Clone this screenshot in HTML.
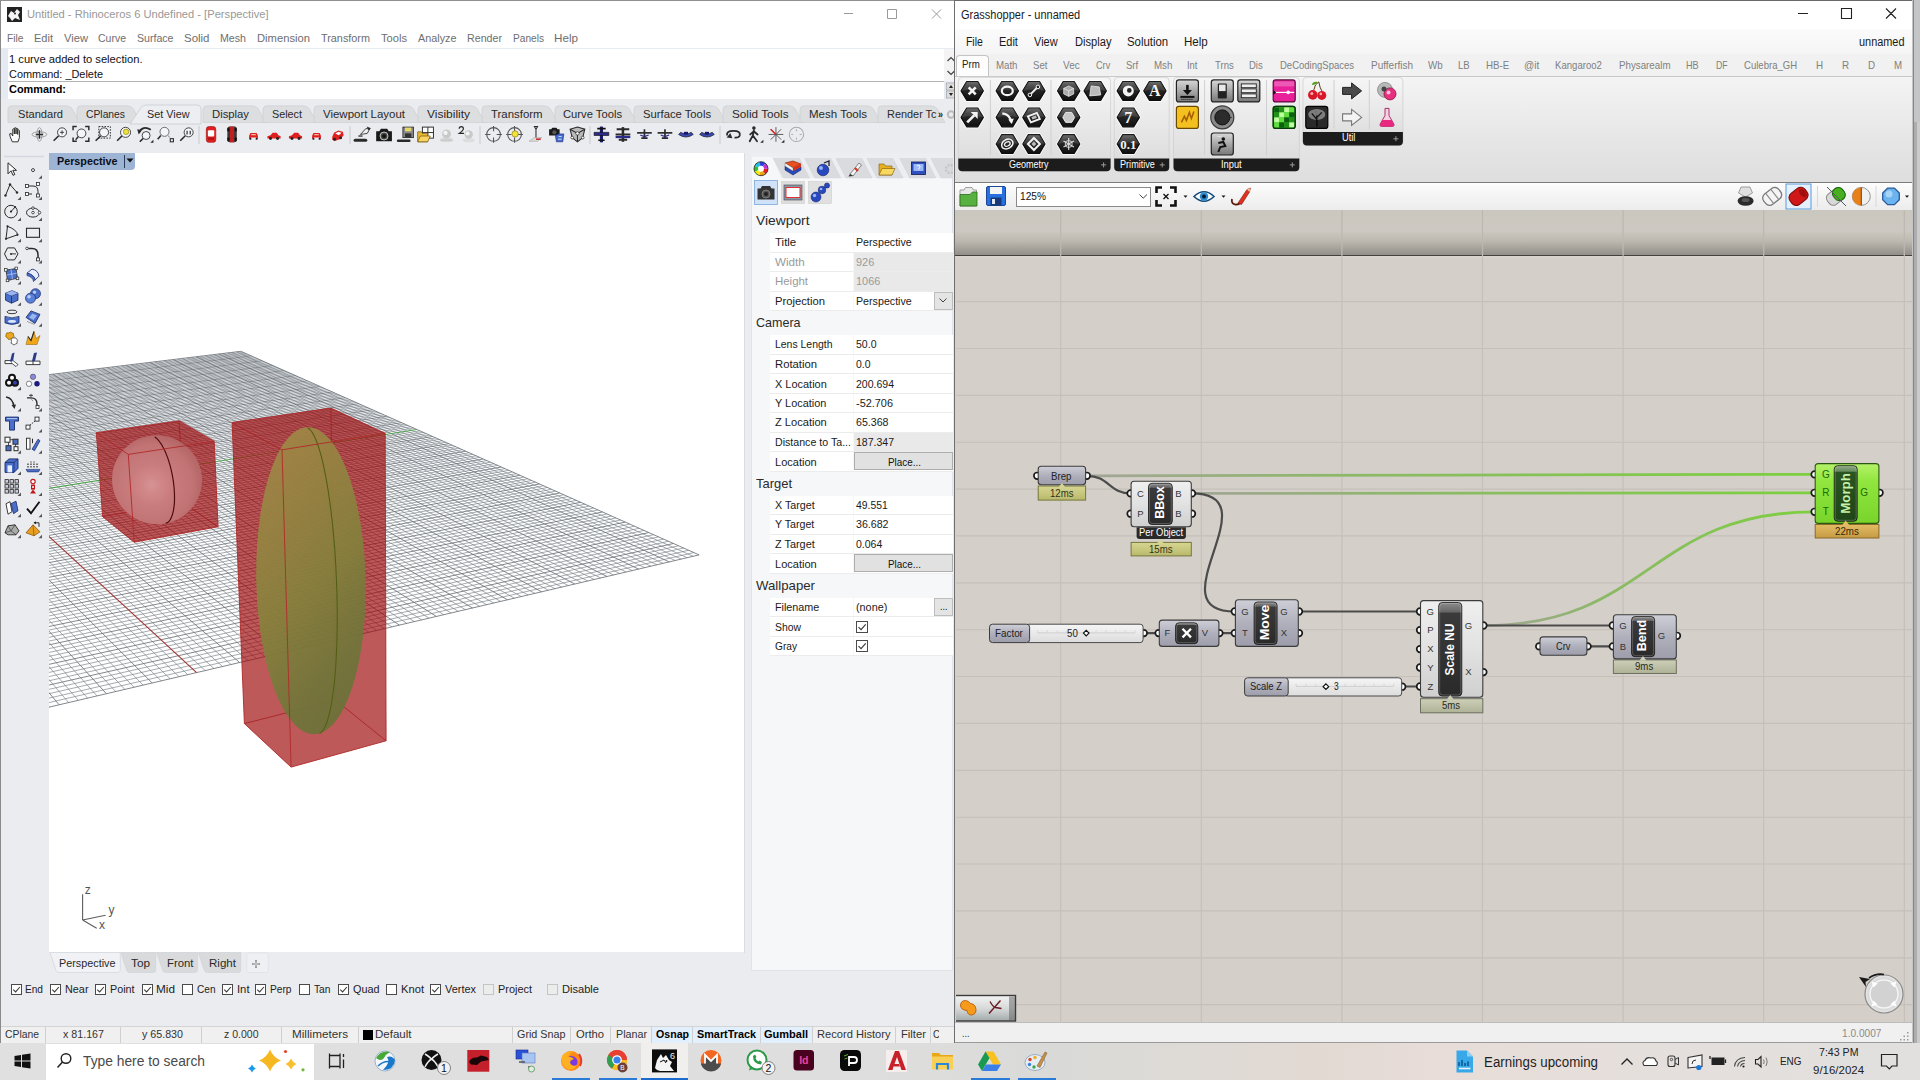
<!DOCTYPE html>
<html><head><meta charset="utf-8"><title>Rhino + Grasshopper</title><style>
html,body{margin:0;padding:0;}
body{width:1920px;height:1080px;overflow:hidden;position:relative;background:#fff;font-family:"Liberation Sans",sans-serif;}
.a{position:absolute;box-sizing:border-box;}
.t{position:absolute;white-space:nowrap;transform-origin:0 50%;display:block;}
svg{position:absolute;overflow:hidden;}
</style></head><body><div class="a" style="left:0px;top:0px;width:955px;height:1043px;background:#ebecf0;"></div>
<div class="a" style="left:0px;top:0px;width:955px;height:48px;background:#fff;"></div>
<div class="a" style="left:0px;top:0px;width:1px;height:1043px;background:#8a8a8a;"></div>
<div class="a" style="left:0px;top:0px;width:955px;height:1px;background:#909090;"></div>
<svg class="a" style="left:6px;top:6px" width="17" height="17" viewBox="0 0 17 17"><rect x="1" y="1" width="15" height="15" fill="#222"/><path d="M2 10L5 5L8 7L11 3L14 6L12 9L14 14L9 12L6 15L4 12Z" fill="#f4f4f4"/><circle cx="9" cy="7.5" r="1" fill="#222"/></svg>
<span class="t" style="left:26.50px;top:8px;font-size:11px;line-height:12px;height:12px;color:#989898;transform:scaleX(1.0129);">Untitled - Rhinoceros 6 Undefined - [Perspective]</span>
<svg class="a" style="left:840px;top:5px" width="110" height="20" viewBox="0 0 110 20"><path d="M4 8.5H13M47.5 4.5H56.500V13.5H47.5ZM92 4.500L101 13.500M101 4.500L92 13.500" stroke="#9a9a9a" stroke-width="1" fill="none"/></svg>
<span class="t" style="left:6.50px;top:32px;font-size:11px;line-height:12px;height:12px;color:#6e6e6e;transform:scaleX(0.9310);">File</span>
<span class="t" style="left:34.00px;top:32px;font-size:11px;line-height:12px;height:12px;color:#6e6e6e;transform:scaleX(1.0024);">Edit</span>
<span class="t" style="left:64.00px;top:32px;font-size:11px;line-height:12px;height:12px;color:#6e6e6e;transform:scaleX(1.0151);">View</span>
<span class="t" style="left:98.00px;top:32px;font-size:11px;line-height:12px;height:12px;color:#6e6e6e;transform:scaleX(0.9543);">Curve</span>
<span class="t" style="left:136.50px;top:32px;font-size:11px;line-height:12px;height:12px;color:#6e6e6e;transform:scaleX(0.9629);">Surface</span>
<span class="t" style="left:183.50px;top:32px;font-size:11px;line-height:12px;height:12px;color:#6e6e6e;transform:scaleX(1.0425);">Solid</span>
<span class="t" style="left:220.00px;top:32px;font-size:11px;line-height:12px;height:12px;color:#6e6e6e;transform:scaleX(0.9667);">Mesh</span>
<span class="t" style="left:257.00px;top:32px;font-size:11px;line-height:12px;height:12px;color:#6e6e6e;transform:scaleX(1.0200);">Dimension</span>
<span class="t" style="left:320.50px;top:32px;font-size:11px;line-height:12px;height:12px;color:#6e6e6e;transform:scaleX(0.9858);">Transform</span>
<span class="t" style="left:380.50px;top:32px;font-size:11px;line-height:12px;height:12px;color:#6e6e6e;transform:scaleX(1.0125);">Tools</span>
<span class="t" style="left:417.50px;top:32px;font-size:11px;line-height:12px;height:12px;color:#6e6e6e;transform:scaleX(0.9838);">Analyze</span>
<span class="t" style="left:466.50px;top:32px;font-size:11px;line-height:12px;height:12px;color:#6e6e6e;transform:scaleX(0.9702);">Render</span>
<span class="t" style="left:512.50px;top:32px;font-size:11px;line-height:12px;height:12px;color:#6e6e6e;transform:scaleX(0.9217);">Panels</span>
<span class="t" style="left:553.50px;top:32px;font-size:11px;line-height:12px;height:12px;color:#6e6e6e;transform:scaleX(1.0609);">Help</span>
<div class="a" style="left:1px;top:48px;width:954px;height:51px;background:#e6eaf2;"></div>
<div class="a" style="left:7.5px;top:49px;width:936px;height:49.5px;background:#fff;"></div>
<div class="a" style="left:7.5px;top:81px;width:936px;height:1px;background:#b4b4b4;"></div>
<span class="t" style="left:8.50px;top:53px;font-size:11px;line-height:12px;height:12px;color:#111;transform:scaleX(1.0155);">1 curve added to selection.</span>
<span class="t" style="left:8.50px;top:68px;font-size:11px;line-height:12px;height:12px;color:#111;transform:scaleX(0.9920);">Command: _Delete</span>
<span class="t" style="left:8.50px;top:83px;font-size:11px;line-height:12px;height:12px;color:#000;font-weight:bold;transform:scaleX(0.9923);">Command:</span>
<div class="a" style="left:943.5px;top:49px;width:10px;height:32px;background:#f4f4f4;"></div>
<svg class="a" style="left:944.5px;top:50px" width="12" height="50" viewBox="0 0 12 50"><path d="M2.5 11L6 7.500L9.500 11M2.5 21L6 24.500L9.500 21" stroke="#444" stroke-width="1.2" fill="none"/><rect x="1.500" y="33" width="9" height="7" fill="#ddd" stroke="#999" stroke-width=".6"/><rect x="1.500" y="41" width="9" height="7" fill="#ddd" stroke="#999" stroke-width=".6"/><path d="M4 38L6 35L8 38ZM4 43L6 46L8 43Z" fill="#222"/></svg>
<svg class="a" style="left:0;top:104px" width="955" height="21" viewBox="0 104 955 21"><path d="M8 122.500L8 109.500Q8 105.800 12 105.800L66 105.800Q70 105.800 72 108.500L80 122.500Z" fill="#dddee0" stroke="#c9cbcf" stroke-width=".6"/><path d="M77 122.500L77 109.500Q77 105.800 81 105.800L127 105.800Q131 105.800 133 108.500L141 122.500Z" fill="#dddee0" stroke="#c9cbcf" stroke-width=".6"/><path d="M130 124L141 107.500Q143 105 146 105L197 105Q201 105 201 108.500L201 124Z" fill="#eceef2" stroke="#c9cbcf" stroke-width=".8"/><path d="M203 122.500L203 109.500Q203 105.800 207 105.800L252 105.800Q256 105.800 258 108.500L266 122.500Z" fill="#dddee0" stroke="#c9cbcf" stroke-width=".6"/><path d="M263 122.500L263 109.500Q263 105.800 267 105.800L303 105.800Q307 105.800 309 108.500L317 122.500Z" fill="#dddee0" stroke="#c9cbcf" stroke-width=".6"/><path d="M314 122.500L314 109.500Q314 105.800 318 105.800L407 105.800Q411 105.800 413 108.500L421 122.500Z" fill="#dddee0" stroke="#c9cbcf" stroke-width=".6"/><path d="M418 122.500L418 109.500Q418 105.800 422 105.800L471 105.800Q475 105.800 477 108.500L485 122.500Z" fill="#dddee0" stroke="#c9cbcf" stroke-width=".6"/><path d="M482 122.500L482 109.500Q482 105.800 486 105.800L544 105.800Q548 105.800 550 108.500L558 122.500Z" fill="#dddee0" stroke="#c9cbcf" stroke-width=".6"/><path d="M555 122.500L555 109.500Q555 105.800 559 105.800L623 105.800Q627 105.800 629 108.500L637 122.500Z" fill="#dddee0" stroke="#c9cbcf" stroke-width=".6"/><path d="M634 122.500L634 109.500Q634 105.800 638 105.800L712 105.800Q716 105.800 718 108.500L726 122.500Z" fill="#dddee0" stroke="#c9cbcf" stroke-width=".6"/><path d="M723 122.500L723 109.500Q723 105.800 727 105.800L789 105.800Q793 105.800 795 108.500L803 122.500Z" fill="#dddee0" stroke="#c9cbcf" stroke-width=".6"/><path d="M800 122.500L800 109.500Q800 105.800 804 105.800L867 105.800Q871 105.800 873 108.500L881 122.500Z" fill="#dddee0" stroke="#c9cbcf" stroke-width=".6"/><path d="M878 122.500L878 109.500Q878 105.800 882 105.800L931 105.800Q935 105.800 937 108.500L945 122.500Z" fill="#dddee0" stroke="#c9cbcf" stroke-width=".6"/></svg>
<span class="t" style="left:18.00px;top:108px;font-size:11px;line-height:12px;height:12px;color:#2a2a2a;transform:scaleX(1.0080);">Standard</span>
<span class="t" style="left:85.50px;top:108px;font-size:11px;line-height:12px;height:12px;color:#2a2a2a;transform:scaleX(0.9380);">CPlanes</span>
<span class="t" style="left:147.00px;top:108px;font-size:11px;line-height:12px;height:12px;color:#2a2a2a;transform:scaleX(0.9836);">Set View</span>
<span class="t" style="left:212.00px;top:108px;font-size:11px;line-height:12px;height:12px;color:#2a2a2a;transform:scaleX(1.0259);">Display</span>
<span class="t" style="left:271.50px;top:108px;font-size:11px;line-height:12px;height:12px;color:#2a2a2a;transform:scaleX(0.9813);">Select</span>
<span class="t" style="left:323.00px;top:108px;font-size:11px;line-height:12px;height:12px;color:#2a2a2a;transform:scaleX(1.0423);">Viewport Layout</span>
<span class="t" style="left:427.00px;top:108px;font-size:11px;line-height:12px;height:12px;color:#2a2a2a;transform:scaleX(1.0877);">Visibility</span>
<span class="t" style="left:491.00px;top:108px;font-size:11px;line-height:12px;height:12px;color:#2a2a2a;transform:scaleX(1.0361);">Transform</span>
<span class="t" style="left:563.00px;top:108px;font-size:11px;line-height:12px;height:12px;color:#2a2a2a;transform:scaleX(1.0194);">Curve Tools</span>
<span class="t" style="left:642.50px;top:108px;font-size:11px;line-height:12px;height:12px;color:#2a2a2a;transform:scaleX(1.0235);">Surface Tools</span>
<span class="t" style="left:731.50px;top:108px;font-size:11px;line-height:12px;height:12px;color:#2a2a2a;transform:scaleX(1.0662);">Solid Tools</span>
<span class="t" style="left:808.50px;top:108px;font-size:11px;line-height:12px;height:12px;color:#2a2a2a;transform:scaleX(1.0463);">Mesh Tools</span>
<span class="t" style="left:886.50px;top:108px;font-size:11px;line-height:12px;height:12px;color:#2a2a2a;transform:scaleX(0.9914);">Render Tc</span>
<span class="t" style="left:938.00px;top:108px;font-size:11px;line-height:12px;height:12px;color:#222;font-weight:bold;transform:scaleX(0.8174);">»</span>
<svg class="a" style="left:945px;top:109px" width="10" height="11"><circle cx="6" cy="5.500" r="3.200" fill="none" stroke="#bbb" stroke-width="2"/></svg>
<svg class="a" style="left:0;top:124px" width="955" height="22" viewBox="0 124 955 22"><path d="M199 126V144" stroke="#c8cace" stroke-width="1"/><path d="M350 126V144" stroke="#c8cace" stroke-width="1"/><path d="M480 126V144" stroke="#c8cace" stroke-width="1"/><path d="M590 126V144" stroke="#c8cace" stroke-width="1"/><path d="M720 126V144" stroke="#c8cace" stroke-width="1"/><g transform="translate(7.0 125.0) scale(1.05)"><path d="M5 16L3 11L2.500 8.500L4 8L5.500 10.500V4Q6.200 3 7 4V8.500V3Q7.800 2 8.600 3V8.500V3.500Q9.400 2.500 10.200 3.500V9V5Q11 4.200 11.800 5.200V12L10.500 16Z" fill="#fff" stroke="#2a2a2a" stroke-width=".9"/></g><g transform="translate(30.0 125.0) scale(1.05)"><ellipse cx="9" cy="9" rx="7" ry="2.600" fill="none" stroke="#9a9a9a" stroke-width=".9"/><ellipse cx="9" cy="9" rx="2.400" ry="6.500" fill="none" stroke="#9a9a9a" stroke-width=".9"/><path d="M9 5V13M5.500 9H12.500" stroke="#2a2a2a" stroke-width="1.300"/></g><g transform="translate(50.5 125.0) scale(1.05)"><circle cx="11" cy="7" r="4.300" fill="#f3f5f9" stroke="#3a3a3a" stroke-width=".9"/><path d="M7.800 10.200L3 15" stroke="#2a2a2a" stroke-width="1.500"/><path d="M9 7H13M11 5V9" stroke="#2a2a2a" stroke-width=".8"/></g><g transform="translate(71.5 125.0) scale(1.05)"><circle cx="9.500" cy="8" r="4.200" fill="#f3f5f9" stroke="#3a3a3a" stroke-width=".9"/><path d="M6.500 11L4 14" stroke="#2a2a2a" stroke-width="1.300"/><path d="M1.500 5V1.500H5M13 1.500H16.500V5M16.500 12V15.500H13M5 15.500H1.500V12" stroke="#2a2a2a" stroke-width="1.400" fill="none"/></g><g transform="translate(92.5 125.0) scale(1.05)"><circle cx="11" cy="7" r="4.300" fill="#f3f5f9" stroke="#3a3a3a" stroke-width=".9"/><path d="M7.800 10.200L3 15" stroke="#2a2a2a" stroke-width="1.500"/><rect x="6" y="1.500" width="11" height="11" fill="none" stroke="#2a2a2a" stroke-width=".9" stroke-dasharray="1.500 1.200"/></g><g transform="translate(114.0 125.0) scale(1.05)"><circle cx="11" cy="7" r="4.800" fill="#f3f5f9" stroke="#3a3a3a" stroke-width=".9"/><circle cx="11.500" cy="6.500" r="2.600" fill="#ece23a" stroke="#8a7a10" stroke-width=".6"/><path d="M7.500 10.500L3 15" stroke="#2a2a2a" stroke-width="1.500"/></g><g transform="translate(135.6 125.0) scale(1.05)"><circle cx="10" cy="10" r="3.800" fill="#f3f5f9" stroke="#3a3a3a" stroke-width=".9"/><path d="M7 13L4 16" stroke="#2a2a2a" stroke-width="1.500"/><path d="M3 7Q7 0 14.500 4.500" stroke="#2a2a2a" stroke-width="1.700" fill="none"/><path d="M1.500 4L6 5L3 9Z" fill="#2a2a2a"/><path d="M14 17H17V14Z" fill="#2a2a2a"/></g><g transform="translate(156.1 125.0) scale(1.05)"><circle cx="8" cy="6.500" r="4.300" fill="#f3f5f9" stroke="#666" stroke-width=".9"/><path d="M4.500 10L1.500 13.500" stroke="#2a2a2a" stroke-width="1.500"/><rect x="13.500" y="13" width="3" height="3" fill="none" stroke="#2a2a2a" stroke-width="1"/><path d="M11.500 10L13 12" stroke="#666" stroke-width=".8"/></g><g transform="translate(177.1 125.0) scale(1.05)"><circle cx="11" cy="7" r="4.300" fill="#f3f5f9" stroke="#3a3a3a" stroke-width=".9"/><path d="M7.800 10.200L3 15" stroke="#2a2a2a" stroke-width="1.500"/><path d="M9.500 5.500V9M12.500 5.500V9" stroke="#2a2a2a" stroke-width="1.100"/></g><g transform="translate(201.6 125.0) scale(1.05)"><rect x="4.500" y="1.500" width="9" height="15" rx="2.500" fill="#e02020" stroke="#a01010" stroke-width=".6"/><rect x="6" y="5" width="6" height="6" rx="1" fill="#fff"/><rect x="6" y="12" width="6" height="2" fill="#b01010"/></g><g transform="translate(222.6 125.0) scale(1.05)"><rect x="4.500" y="1.500" width="9" height="15" rx="2" fill="#3a3a3a"/><rect x="7" y="1.500" width="4" height="15" fill="#c02020"/><rect x="4.500" y="3" width="2" height="3" fill="#111"/><rect x="11.500" y="3" width="2" height="3" fill="#111"/><rect x="4.500" y="12" width="2" height="3" fill="#111"/><rect x="11.500" y="12" width="2" height="3" fill="#111"/></g><g transform="translate(245.6 127.4) scale(0.88)"><path d="M4 13V9.500L5.500 6.500H12.500L14 9.500V13H12V11.500H6V13Z" fill="#e02020"/><path d="M6 9L6.800 7.500H11.200L12 9Z" fill="#f8c0a0"/><rect x="4.500" y="12" width="2" height="2" fill="#222"/><rect x="11.500" y="12" width="2" height="2" fill="#222"/></g><g transform="translate(266.1 127.4) scale(0.88)"><path d="M1.500 12.500V10L5 9L7.500 6H12L14 9L16.500 10V12.500Z" fill="#e02020"/><circle cx="5" cy="12.500" r="1.700" fill="#222"/><circle cx="13" cy="12.500" r="1.700" fill="#222"/></g><g transform="translate(287.6 127.4) scale(0.88)"><path d="M1.500 12.500V10L5 9L7.500 6H12L14 9L16.500 10V12.500Z" fill="#e02020"/><circle cx="5" cy="12.500" r="1.700" fill="#222"/><circle cx="13" cy="12.500" r="1.700" fill="#222"/></g><g transform="translate(308.6 127.4) scale(0.88)"><path d="M4 13V9.500L5.500 6.500H12.500L14 9.500V13H12V11.500H6V13Z" fill="#e02020"/><path d="M6 9L6.800 7.500H11.200L12 9Z" fill="#f8c0a0"/><rect x="4.500" y="12" width="2" height="2" fill="#222"/><rect x="11.500" y="12" width="2" height="2" fill="#222"/></g><g transform="translate(329.6 127.4) scale(0.88)"><path d="M3 11L5 6L10 3.500L15 5L16 8.500L13 13L6 15.500L3 14Z" fill="#e02020"/><path d="M6.500 7L10 5L13.500 6L10.500 9Z" fill="#fff"/><circle cx="5.500" cy="13.500" r="1.600" fill="#222"/><circle cx="12.500" cy="12" r="1.600" fill="#222"/></g><g transform="translate(353.1 125.0) scale(1.05)"><path d="M2 14.500H12" stroke="#2a2a2a" stroke-width="3" stroke-linecap="round"/><path d="M7 9L12 3.500H16L13.500 8Z" fill="#eee" stroke="#2a2a2a" stroke-width=".8"/><path d="M5 10.500L9 10.500" stroke="#2a2a2a" stroke-width="1.200"/><path d="M13 1.500L17 3L14.500 5Z" fill="#2a2a2a"/></g><g transform="translate(374.6 125.0) scale(1.05)"><path d="M1.500 6H4.500L6 3.500H12L13.500 6H16.500V15.500H1.500Z" fill="#1a1a1a"/><circle cx="9" cy="10.500" r="3.800" fill="#444" stroke="#ddd" stroke-width=".8"/><circle cx="9" cy="10.500" r="1.800" fill="#111"/></g><g transform="translate(396.6 125.0) scale(1.05)"><rect x="6" y="2" width="10" height="10" fill="#888" stroke="#2a2a2a" stroke-width=".8"/><rect x="8" y="2.500" width="6" height="3.500" fill="#e6d96a"/><rect x="8" y="8" width="6" height="4" fill="#333"/><path d="M1.500 15H12" stroke="#2a2a2a" stroke-width="2.600" stroke-linecap="round"/></g><g transform="translate(416.1 125.0) scale(1.05)"><rect x="6" y="2" width="10.500" height="10.500" fill="#fff" stroke="#2a2a2a" stroke-width=".9"/><path d="M11.200 2V12.500M6 7.200H16.500" stroke="#2a2a2a" stroke-width=".9"/><path d="M1.500 16V6.500H5L6 8H11V16Z" fill="#e9b830" stroke="#7a5a10" stroke-width=".7"/><path d="M1.500 16L4 10.500H13.500L11 16Z" fill="#f7d560" stroke="#7a5a10" stroke-width=".7"/></g><g transform="translate(437.1 125.0) scale(1.05)"><ellipse cx="9" cy="14" rx="6.500" ry="2.300" fill="#ddd"/><circle cx="9" cy="8.500" r="4.200" fill="#c9c9c9"/><circle cx="8" cy="7.500" r="2" fill="#f4f4f4"/><path d="M3 15H15M4.500 13.500H13.500" stroke="#bbb" stroke-width=".6"/></g><g transform="translate(457.1 125.0) scale(1.05)"><ellipse cx="11" cy="14.500" rx="6" ry="2" fill="#ddd"/><circle cx="11" cy="9" r="4" fill="#c9c9c9"/><circle cx="10" cy="8" r="1.900" fill="#f4f4f4"/><path d="M2 3.500Q2 1.500 4 1.500Q6 1.500 6 3.500Q6 5 2 8H6.500" stroke="#2a2a2a" stroke-width="1.100" fill="none"/></g><g transform="translate(484.1 125.0) scale(1.05)"><circle cx="9" cy="9" r="6.500" fill="none" stroke="#555" stroke-width="1"/><path d="M9 1V6M9 12V17M1 9H6M12 9H17" stroke="#555" stroke-width="1"/></g><g transform="translate(505.1 125.0) scale(1.05)"><circle cx="9" cy="9" r="6.500" fill="none" stroke="#555" stroke-width="1"/><path d="M9 1V6M9 12V17M1 9H6M12 9H17" stroke="#555" stroke-width="1"/><circle cx="9.500" cy="8.500" r="3" fill="#f2e23a" stroke="#8a7a10" stroke-width=".6"/></g><g transform="translate(526.0 125.0) scale(1.05)"><path d="M8 1.500H11L9.500 4Z M9.500 4V13" stroke="#2a2a2a" stroke-width="1" fill="#fff"/><path d="M3 15.500L8 12H15L11 15.500Z" fill="#ddd" stroke="#999" stroke-width=".5"/><path d="M9.500 13.500H14" stroke="#d02020" stroke-width="1.400"/></g><g transform="translate(547.0 125.0) scale(1.05)"><path d="M2 4H4L5 2.500H9L10 4H12V10H2Z" fill="#1a1a1a"/><circle cx="7" cy="7" r="2" fill="#555"/><path d="M8 10L11 8.500H16L15 16H9Z" fill="#4a6ad0" stroke="#1a2a80" stroke-width=".6"/><path d="M11 11H14M10.500 13.500H14" stroke="#cfe" stroke-width=".8"/></g><g transform="translate(568.0 125.0) scale(1.05)"><path d="M2 4L9 2L16 4L14 12L9 16L4 12Z" fill="#bbb" stroke="#2a2a2a" stroke-width="1"/><path d="M2 4L9 8L16 4M9 8V16" stroke="#2a2a2a" stroke-width="1" fill="none"/><circle cx="9" cy="8" r="1.600" fill="#fff" stroke="#2a2a2a" stroke-width=".7"/><circle cx="4" cy="12" r="1.300" fill="#fff" stroke="#2a2a2a" stroke-width=".7"/><circle cx="14" cy="12" r="1.300" fill="#fff" stroke="#2a2a2a" stroke-width=".7"/></g><g transform="translate(592.0 125.0) scale(1.05)"><path d="M9 1.500V16.500" stroke="#1a1a6a" stroke-width="3"/><path d="M2 7H16V10H2Z" fill="#2a2a8a" stroke="#111" stroke-width=".6"/><path d="M5 3.500H13M6 14.500H12" stroke="#111" stroke-width="1.600"/></g><g transform="translate(613.5 125.0) scale(1.05)"><path d="M3 4H15M2 9H16M5 14H13" stroke="#2a2a2a" stroke-width="1.800"/><path d="M9 2V16" stroke="#2a2a2a" stroke-width="2.400"/><path d="M2 11.500H16" stroke="#2a2a8a" stroke-width="2"/></g><g transform="translate(635.0 125.0) scale(1.05)"><path d="M2 7.500H16" stroke="#2a2a2a" stroke-width="1.600"/><path d="M9 4V13M6 12.500H12" stroke="#2a2a2a" stroke-width="1.600"/><path d="M5 9.500L9 11L13 9.500" stroke="#2a2a8a" stroke-width="1.200" fill="none"/></g><g transform="translate(655.5 125.0) scale(1.05)"><path d="M2 7.500H16" stroke="#2a2a2a" stroke-width="1.600"/><path d="M9 4V13M6 12.500H12" stroke="#2a2a2a" stroke-width="1.600"/><path d="M5 9.500L9 11L13 9.500" stroke="#2a2a8a" stroke-width="1.200" fill="none"/></g><g transform="translate(676.5 125.0) scale(1.05)"><path d="M2 9Q9 14 16 9L14 7Q9 10 4 7Z" fill="#3a4ab0" stroke="#111" stroke-width=".6"/><path d="M7 6.500H11V9H7Z" fill="#1a1a6a"/></g><g transform="translate(697.5 125.0) scale(1.05)"><path d="M2 9Q9 14 16 9L14 7Q9 10 4 7Z" fill="#3a4ab0" stroke="#111" stroke-width=".6"/><path d="M7 6.500H11V9H7Z" fill="#1a1a6a"/></g><g transform="translate(724.0 125.0) scale(1.05)"><path d="M3 10Q2 5.500 9 5.500Q16 5.500 15 10Q14 12.500 10 12" stroke="#2a2a2a" stroke-width="1.700" fill="none"/><path d="M6 7.500L2.500 12L8 12.500Z" fill="#2a2a2a"/></g><g transform="translate(745.5 125.0) scale(1.05)"><circle cx="8" cy="2.800" r="1.700" fill="#2a2a2a"/><path d="M8 5L7 10L4 15.500M7 10L11 15.500M7.800 6L4.500 9M7.800 6L11.500 9" stroke="#2a2a2a" stroke-width="1.700" fill="none" stroke-linecap="round"/><path d="M14 17H17V14Z" fill="#2a2a2a"/></g><g transform="translate(766.5 125.0) scale(1.05)"><path d="M9 2V16M2 9H16M4 4L14 14M14 4L4 14" stroke="#555" stroke-width=".9"/><path d="M4 4L9 9" stroke="#e02020" stroke-width="1.300"/><path d="M14 17H17V14Z" fill="#2a2a2a"/></g><g transform="translate(787.0 125.0) scale(1.05)"><circle cx="9" cy="9" r="6.800" fill="none" stroke="#aaa" stroke-width="1"/><path d="M9 4V6M9 12V14M4 9H6M12 9H14" stroke="#aaa" stroke-width=".9"/></g></svg>
<svg class="a" style="left:0;top:155px" width="49" height="390" viewBox="0 155 49 390"><path d="M4 156.500H44" stroke="#d4d7dd" stroke-width="1.500"/><g transform="translate(3.0 160.3) scale(1.0)"><path d="M5 2.500V13.500L8 10.500L10 15L11.800 14.200L9.800 10H13.500Z" fill="#fff" stroke="#2a2a2a" stroke-width="1"/></g><g transform="translate(24.0 160.3) scale(1.0)"><circle cx="9" cy="9.800" r="1.500" fill="#fff" stroke="#2a2a2a" stroke-width=".9"/></g><path d="M38.5 178.8h3.500v-3.500Z" fill="#555"/><g transform="translate(3.0 181.5) scale(1.0)"><path d="M2.500 14L7 3L14 11" fill="none" stroke="#2a2a2a" stroke-width="1"/><circle cx="2.500" cy="14" r="1.200" fill="#2a2a2a"/><circle cx="7" cy="3" r="1.200" fill="#2a2a2a"/><circle cx="14" cy="11" r="1.200" fill="#2a2a2a"/></g><g transform="translate(24.0 181.5) scale(1.0)"><path d="M3 4.500H9Q14 4.500 14 10V13M3 12.500H8" fill="none" stroke="#2a2a2a" stroke-width="1"/><rect x="1.500" y="3" width="3" height="3" fill="#fff" stroke="#2a2a2a" stroke-width=".8"/><rect x="1.500" y="11" width="3" height="3" fill="#fff" stroke="#2a2a2a" stroke-width=".8"/><rect x="12.500" y="1" width="3" height="3" fill="#fff" stroke="#2a2a2a" stroke-width=".8"/><rect x="12.500" y="12.500" width="3" height="3" fill="#fff" stroke="#2a2a2a" stroke-width=".8"/></g><path d="M17.5 199.95000000000002h3.500v-3.500Z" fill="#555"/><path d="M38.5 199.95000000000002h3.500v-3.500Z" fill="#555"/><g transform="translate(3.0 202.6) scale(1.0)"><circle cx="8" cy="9" r="6.300" fill="none" stroke="#2a2a2a" stroke-width="1"/><path d="M8 9L12 4.500" stroke="#2a2a2a" stroke-width="1"/><circle cx="8" cy="9" r="1.100" fill="#2a2a2a"/><circle cx="12" cy="4.500" r="1.100" fill="#2a2a2a"/></g><g transform="translate(24.0 202.6) scale(1.0)"><ellipse cx="9" cy="10" rx="6.500" ry="4.500" fill="none" stroke="#2a2a2a" stroke-width="1"/><circle cx="9" cy="10" r="1.300" fill="#fff" stroke="#2a2a2a" stroke-width=".8"/><circle cx="9" cy="5.500" r="1.300" fill="#fff" stroke="#2a2a2a" stroke-width=".8"/><circle cx="15.500" cy="10" r="1.300" fill="#fff" stroke="#2a2a2a" stroke-width=".8"/></g><path d="M17.5 221.10000000000002h3.500v-3.500Z" fill="#555"/><path d="M38.5 221.10000000000002h3.500v-3.500Z" fill="#555"/><g transform="translate(3.0 223.8) scale(1.0)"><path d="M3 15L4.500 2.500Q14 6 14.500 11Z" fill="none" stroke="#2a2a2a" stroke-width="1"/><circle cx="3" cy="15" r="1.100" fill="#2a2a2a"/><circle cx="4.500" cy="2.500" r="1.100" fill="#2a2a2a"/><circle cx="14.500" cy="11" r="1.100" fill="#2a2a2a"/></g><g transform="translate(24.0 223.8) scale(1.0)"><rect x="2.500" y="4.500" width="13" height="9" fill="none" stroke="#2a2a2a" stroke-width="1.100"/></g><path d="M17.5 242.25h3.500v-3.500Z" fill="#555"/><path d="M38.5 242.25h3.500v-3.500Z" fill="#555"/><g transform="translate(3.0 244.9) scale(1.0)"><path d="M4.500 3H11.500L15 9L11.500 15H4.500L1.500 9Z" fill="none" stroke="#2a2a2a" stroke-width="1"/><path d="M8 9H13" stroke="#2a2a2a" stroke-width=".9"/><circle cx="8" cy="9" r="1" fill="#2a2a2a"/></g><g transform="translate(24.0 244.9) scale(1.0)"><path d="M3 3.500H8Q14 3.500 14 10V14" fill="none" stroke="#2a2a2a" stroke-width="1.500"/><circle cx="3" cy="3.500" r="1.300" fill="#fff" stroke="#2a2a2a" stroke-width=".8"/><rect x="12.500" y="13" width="3" height="3" fill="#fff" stroke="#2a2a2a" stroke-width=".8"/></g><path d="M17.5 263.4h3.500v-3.500Z" fill="#555"/><path d="M38.5 263.4h3.500v-3.500Z" fill="#555"/><g transform="translate(3.0 266.1) scale(1.0)"><path d="M3 4L13 2.500L14.500 12L4.500 14.500Z" fill="#4a6fc8" stroke="#2a2a2a" stroke-width=".8"/><path d="M8 3.200L9.500 13.200M3.700 9L13.800 7" stroke="#cfe0ff" stroke-width=".6"/><rect x="1.500" y="2.500" width="2.600" height="2.600" fill="#fff" stroke="#2a2a2a" stroke-width=".7"/><rect x="12" y="1" width="2.600" height="2.600" fill="#fff" stroke="#2a2a2a" stroke-width=".7"/><rect x="13.200" y="11" width="2.600" height="2.600" fill="#fff" stroke="#2a2a2a" stroke-width=".7"/><rect x="3.200" y="13" width="2.600" height="2.600" fill="#fff" stroke="#2a2a2a" stroke-width=".7"/></g><g transform="translate(24.0 266.1) scale(1.0)"><path d="M3 7L8 3Q14 4 15 10L11 14Q11 9 3 7Z" fill="#e8eefc" stroke="#2a3a7a" stroke-width=".9"/><path d="M11 14Q11 9 3 7V9.500Q9 11 9.500 15.500Z" fill="#4a6fc8" stroke="#2a3a7a" stroke-width=".7"/></g><path d="M17.5 284.55h3.500v-3.500Z" fill="#555"/><path d="M38.5 284.55h3.500v-3.500Z" fill="#555"/><g transform="translate(3.0 287.2) scale(1.0)"><path d="M2.500 6L9 3.500L15 6V13L8.500 16L2.500 13Z" fill="#4a6fc8" stroke="#1a2a6a" stroke-width=".8"/><path d="M2.500 6L8.500 8.500L15 6M8.500 8.500V16" stroke="#1a2a6a" stroke-width=".8" fill="none"/><path d="M2.500 6L9 3.500L15 6L8.500 8.500Z" fill="#9ab4f0"/></g><g transform="translate(24.0 287.2) scale(1.0)"><circle cx="11.500" cy="6.500" r="5" fill="#4a6fc8" stroke="#1a2a6a" stroke-width=".7"/><circle cx="6.500" cy="11" r="5" fill="#5a80d8" stroke="#1a2a6a" stroke-width=".7"/><circle cx="5" cy="9.500" r="1.800" fill="#b8ccf8"/><circle cx="10.500" cy="5" r="1.600" fill="#b8ccf8"/></g><path d="M17.5 305.7h3.500v-3.500Z" fill="#555"/><path d="M38.5 305.7h3.500v-3.500Z" fill="#555"/><g transform="translate(3.0 308.4) scale(1.0)"><ellipse cx="9" cy="3.500" rx="5" ry="1.800" fill="none" stroke="#2a2a2a" stroke-width=".9"/><path d="M2 8Q9 11 16 8V14.500Q9 17.500 2 14.500Z" fill="#4a6fc8" stroke="#1a2a6a" stroke-width=".8"/><ellipse cx="9" cy="13" rx="4" ry="1.300" fill="#dfe8ff"/></g><g transform="translate(24.0 308.4) scale(1.0)"><path d="M2 9L7 2.500L16 6L11 15Z" fill="#4a6fc8" stroke="#1a2a6a" stroke-width=".8"/><path d="M5 9L8.500 5L13 7L9.500 11.500Z" fill="#9ab4f0"/><path d="M3 13L10.500 16" stroke="#888" stroke-width=".8"/></g><path d="M17.5 326.85h3.500v-3.500Z" fill="#555"/><path d="M38.5 326.85h3.500v-3.500Z" fill="#555"/><g transform="translate(3.0 329.5) scale(1.0)"><path d="M3 5Q3 2.500 6 3.500Q7 1.500 9 3.500Q11 3 10.500 5.500Q12 7 10 8Q10 10.500 7.500 9.500Q5 11 4.500 8.500Q2 8 3 5Z" fill="#e9a820" stroke="#8a5a00" stroke-width=".7"/><path d="M9 9Q9 7.500 11 8.500Q13 7.500 13.500 9.500Q15.500 10.500 14 12Q15 14.500 12.500 14.500Q11 16.500 9.500 14.500Q7 14 8.500 12Q7.500 10 9 9Z" fill="#fff" stroke="#2a2a2a" stroke-width=".7"/></g><g transform="translate(24.0 329.5) scale(1.0)"><path d="M2 15L4 7L7 11L10 2L12 9L16 6L13 15Z" fill="#f0a818" stroke="#8a5a00" stroke-width=".5"/><path d="M4 7L7 11L10 2" fill="none" stroke="#2a2a2a" stroke-width="1.100"/></g><g transform="translate(3.0 350.6) scale(1.0)"><path d="M2 10H9V13H2Z" fill="#fff" stroke="#2a2a2a" stroke-width=".9"/><path d="M9 3L11.500 2L10 11L7 11Z" fill="#2a3a8a"/><path d="M8 12L13 16L15 14L10 10" fill="#fff" stroke="#2a2a2a" stroke-width=".8"/></g><g transform="translate(24.0 350.6) scale(1.0)"><path d="M2 10.500H16V14H2Z" fill="#fff" stroke="#2a2a2a" stroke-width=".9"/><path d="M9 10.500V14" stroke="#2a2a2a" stroke-width=".9"/><path d="M10 2.500L13 2L11 10.500H8Z" fill="#2a3a8a"/></g><g transform="translate(3.0 371.8) scale(1.0)"><circle cx="9" cy="6" r="4" fill="#111"/><circle cx="6" cy="11" r="4" fill="#111"/><circle cx="12" cy="11" r="4" fill="#111"/><circle cx="9" cy="6" r="2" fill="#fff"/><circle cx="6" cy="11" r="2" fill="#fff"/><circle cx="12" cy="11" r="2" fill="#3040b0"/></g><g transform="translate(24.0 371.8) scale(1.0)"><circle cx="9" cy="5" r="2.700" fill="#8a8ad8" stroke="#334" stroke-width=".5"/><circle cx="5" cy="12" r="2.700" fill="#fff" stroke="#556" stroke-width=".7"/><circle cx="13" cy="12" r="2.700" fill="#1a1a7a"/></g><path d="M17.5 390.3h3.500v-3.500Z" fill="#555"/><g transform="translate(3.0 392.9) scale(1.0)"><path d="M3 4Q10 5 11 14" fill="none" stroke="#2a2a2a" stroke-width="1.500"/><path d="M8.500 12L11.500 16L13 11.500Z" fill="#2a2a2a"/></g><g transform="translate(24.0 392.9) scale(1.0)"><path d="M3 5H7Q13 5 13 11V13" fill="none" stroke="#2a2a2a" stroke-width="1.400"/><path d="M5 2.500H9M7 1V4" stroke="#2a2a2a" stroke-width=".8"/><rect x="12" y="12.500" width="3" height="3" fill="#fff" stroke="#2a2a2a" stroke-width=".8"/><path d="M9 8L6 5" stroke="#2a2a2a" stroke-width=".7" stroke-dasharray="1 1"/></g><path d="M17.5 411.45h3.500v-3.500Z" fill="#555"/><path d="M38.5 411.45h3.500v-3.500Z" fill="#555"/><g transform="translate(3.0 414.1) scale(1.0)"><path d="M2.500 3H15.500V7H11.500V16H6.500V7H2.500Z" fill="#4a6fc8" stroke="#1a2a6a" stroke-width=".9"/><path d="M4 4.500H14" stroke="#b8ccf8" stroke-width="1"/></g><g transform="translate(24.0 414.1) scale(1.0)"><rect x="2" y="11" width="4" height="4" fill="#fff" stroke="#2a2a2a" stroke-width=".9"/><rect x="11" y="3" width="4" height="4" fill="#fff" stroke="#2a2a2a" stroke-width=".9"/><path d="M6 11L11 7" stroke="#2a2a2a" stroke-width=".9" stroke-dasharray="1.500 1"/></g><path d="M38.5 432.6h3.500v-3.500Z" fill="#555"/><g transform="translate(3.0 435.2) scale(1.0)"><rect x="2" y="2" width="5" height="5" fill="#fff" stroke="#2a2a2a" stroke-width="1"/><rect x="10" y="4" width="5" height="5" fill="#4a6fc8" stroke="#2a2a2a" stroke-width="1"/><rect x="3" y="10.500" width="5" height="5" fill="#4a6fc8" stroke="#2a2a2a" stroke-width="1"/><rect x="11" y="11.500" width="4" height="4" fill="#fff" stroke="#2a2a2a" stroke-width="1"/><path d="M7 4.500H10M12.500 9V11.500M5.500 7V10.500" stroke="#2a2a2a" stroke-width=".8"/></g><g transform="translate(24.0 435.2) scale(1.0)"><rect x="2.500" y="3" width="3.500" height="11" fill="#fff" stroke="#2a2a2a" stroke-width=".9"/><path d="M8 14L14 4L16 5.500L10.500 15.500Z" fill="#4a6fc8" stroke="#1a2a6a" stroke-width=".7"/><path d="M8.500 3.500V8" stroke="#2a2a2a" stroke-width="1"/></g><path d="M17.5 453.75h3.500v-3.500Z" fill="#555"/><path d="M38.5 453.75h3.500v-3.500Z" fill="#555"/><g transform="translate(3.0 456.4) scale(1.0)"><path d="M2 6L6 2.500H15V12L11 16H2Z" fill="#4a6fc8" stroke="#1a2a6a" stroke-width=".9"/><path d="M2 6H11V16M11 6L15 2.500" fill="none" stroke="#1a2a6a" stroke-width=".8"/><rect x="4.500" y="9" width="4.500" height="7" fill="#e8eefc"/></g><g transform="translate(24.0 456.4) scale(1.0)"><path d="M2 13H16L14.500 15.500H3.500Z" fill="#4a6fc8" stroke="#1a2a6a" stroke-width=".6"/><path d="M4 11V7M7 11V5M10 11V5M13 11V7" stroke="#2a2a2a" stroke-width="1.200" stroke-dasharray="1.500 1"/></g><path d="M17.5 474.9h3.500v-3.500Z" fill="#555"/><path d="M38.5 474.9h3.500v-3.500Z" fill="#555"/><g transform="translate(3.0 477.6) scale(1.0)"><rect x="2" y="2" width="3.500" height="3.500" fill="#ccd" stroke="#2a2a2a" stroke-width=".8"/><rect x="2" y="7" width="3.500" height="3.500" fill="#ccd" stroke="#2a2a2a" stroke-width=".8"/><rect x="2" y="12" width="3.500" height="3.500" fill="#ccd" stroke="#2a2a2a" stroke-width=".8"/><rect x="7" y="2" width="3.500" height="3.500" fill="#ccd" stroke="#2a2a2a" stroke-width=".8"/><rect x="7" y="7" width="3.500" height="3.500" fill="#ccd" stroke="#2a2a2a" stroke-width=".8"/><rect x="7" y="12" width="3.500" height="3.500" fill="#ccd" stroke="#2a2a2a" stroke-width=".8"/><rect x="12" y="2" width="3.500" height="3.500" fill="#ccd" stroke="#2a2a2a" stroke-width=".8"/><rect x="12" y="7" width="3.500" height="3.500" fill="#ccd" stroke="#2a2a2a" stroke-width=".8"/><rect x="12" y="12" width="3.500" height="3.500" fill="#ccd" stroke="#2a2a2a" stroke-width=".8"/></g><g transform="translate(24.0 477.6) scale(1.0)"><circle cx="9" cy="4" r="2.200" fill="#fff" stroke="#c01818" stroke-width="1.100"/><rect x="7" y="7" width="4" height="5" fill="#c01818"/><path d="M6 16L9 12L12 16Z" fill="#c01818"/><circle cx="9" cy="9.500" r="1" fill="#fff"/></g><path d="M17.5 496.05h3.500v-3.500Z" fill="#555"/><path d="M38.5 496.05h3.500v-3.500Z" fill="#555"/><g transform="translate(3.0 498.7) scale(1.0)"><path d="M3 5L7 3L9 13L5 15.500Z" fill="#fff" stroke="#2a2a2a" stroke-width=".9"/><path d="M8 5L13 2.500L15 12L10.500 15Z" fill="#4a6fc8" stroke="#1a2a6a" stroke-width=".8"/></g><g transform="translate(24.0 498.7) scale(1.0)"><path d="M3 10L7 14.500L15.500 3" fill="none" stroke="#111" stroke-width="1.800"/></g><path d="M17.5 517.2h3.500v-3.500Z" fill="#555"/><path d="M38.5 517.2h3.500v-3.500Z" fill="#555"/><g transform="translate(3.0 519.8) scale(1.0)"><path d="M2 13L5 6L12 5L16 11L13 15H5Z" fill="#aaa" stroke="#2a2a2a" stroke-width=".9"/><path d="M5 6L8 11L13 15M8 11L12 5M8 11L2 13" stroke="#2a2a2a" stroke-width=".6" fill="none"/></g><g transform="translate(24.0 519.8) scale(1.0)"><path d="M2 13L9 5L16 12L10 16Z" fill="#e9a020" stroke="#7a4a00" stroke-width=".7"/><path d="M9 5L10 16" stroke="#7a4a00" stroke-width=".6"/><path d="M10 3H15V7" fill="none" stroke="#2a2a2a" stroke-width="1"/><path d="M12 1.500L9.500 3L12 4.500Z" fill="#2a2a2a"/></g><path d="M17.5 538.3499999999999h3.500v-3.500Z" fill="#555"/><path d="M38.5 538.3499999999999h3.500v-3.500Z" fill="#555"/></svg>
<svg class="a" style="left:49px;top:152.5px" width="695" height="799.5" viewBox="0 0 695 799.5"><rect width="695" height="799.5" fill="#fff"/><defs><radialGradient id="sph" cx="0.44" cy="0.56" r="0.6"><stop offset="0" stop-color="#fffafa"/><stop offset="0.18" stop-color="#f6e4e4"/><stop offset="0.4" stop-color="#e8d2d2"/><stop offset="0.75" stop-color="#dcc4c4"/><stop offset="1" stop-color="#c0a8a8"/></radialGradient><linearGradient id="ell" x1="0.3" x2="0.7" y1="0" y2="1"><stop offset="0" stop-color="#a4e674"/><stop offset="0.5" stop-color="#74dc62"/><stop offset="0.8" stop-color="#50c85e"/><stop offset="1" stop-color="#44c05c"/></linearGradient></defs><path d="M-601.3 296.4L193.9 199.3M-593.9 294.0L-620.4 699.4M-601.5 297.9L196.0 200.2M-586.7 293.1L-606.3 696.1M-601.6 299.4L198.1 201.1M-579.5 292.3L-592.3 692.8M-601.7 301.0L200.1 202.0M-572.3 291.4L-578.4 689.6M-602.0 304.1L204.3 203.9M-558.0 289.6L-550.9 683.2M-602.1 305.7L206.5 204.8M-550.9 288.8L-537.3 680.0M-602.2 307.2L208.6 205.8M-543.8 287.9L-523.9 676.8M-602.4 308.8L210.7 206.7M-536.8 287.1L-510.5 673.7M-602.6 312.1L215.0 208.6M-522.8 285.4L-484.1 667.5M-602.7 313.7L217.2 209.6M-515.8 284.5L-471.0 664.4M-602.9 315.3L219.4 210.6M-508.9 283.7L-458.0 661.4M-603.0 317.0L221.6 211.5M-502.0 282.8L-445.2 658.4M-603.3 320.3L226.0 213.5M-488.3 281.1L-419.7 652.4M-603.4 322.0L228.2 214.5M-481.5 280.3L-407.2 649.5M-603.6 323.7L230.5 215.5M-474.7 279.5L-394.7 646.6M-603.7 325.4L232.7 216.5M-467.9 278.7L-382.3 643.7M-604.0 328.9L237.3 218.5M-454.4 277.0L-357.8 637.9M-604.1 330.6L239.6 219.5M-447.8 276.2L-345.6 635.1M-604.3 332.4L241.9 220.6M-441.1 275.4L-333.6 632.3M-604.4 334.2L244.2 221.6M-434.5 274.6L-321.7 629.5M-604.7 337.8L248.9 223.7M-421.3 273.0L-298.0 623.9M-604.9 339.6L251.3 224.7M-414.7 272.2L-286.3 621.2M-605.0 341.4L253.7 225.8M-408.2 271.4L-274.7 618.5M-605.2 343.3L256.0 226.8M-401.7 270.6L-263.2 615.8M-605.5 347.0L260.9 229.0M-388.7 269.0L-240.4 610.4M-605.6 348.9L263.3 230.1M-382.3 268.2L-229.1 607.8M-605.8 350.8L265.8 231.2M-375.9 267.5L-217.9 605.2M-605.9 352.7L268.2 232.3M-369.5 266.7L-206.8 602.6M-606.3 356.6L273.2 234.5M-356.8 265.1L-184.8 597.4M-606.4 358.6L275.7 235.6M-350.5 264.4L-173.9 594.9M-606.6 360.6L278.2 236.7M-344.2 263.6L-163.0 592.3M-606.8 362.6L280.8 237.8M-337.9 262.8L-152.3 589.8M-607.1 366.6L285.9 240.1M-325.5 261.3L-131.0 584.8M-607.3 368.7L288.5 241.3M-319.3 260.6L-120.5 582.4M-607.4 370.7L291.1 242.4M-313.1 259.8L-110.1 579.9M-607.6 372.8L293.7 243.6M-307.0 259.1L-99.7 577.5M-607.9 377.0L299.0 245.9M-294.8 257.6L-79.1 572.7M-608.1 379.1L301.6 247.1M-288.7 256.9L-68.9 570.3M-608.3 381.3L304.3 248.3M-282.6 256.1L-58.8 567.9M-608.5 383.5L307.0 249.5M-276.6 255.4L-48.8 565.6M-608.8 387.8L312.5 251.9M-264.6 253.9L-28.9 560.9M-609.0 390.1L315.2 253.1M-258.6 253.2L-19.1 558.6M-609.2 392.3L318.0 254.4M-252.7 252.5L-9.3 556.3M-609.4 394.6L320.8 255.6M-246.8 251.7L0.4 554.1M-609.8 399.2L326.4 258.1M-235.0 250.3L19.6 549.6M-609.9 401.5L329.2 259.4M-229.1 249.6L29.2 547.3M-610.1 403.8L332.1 260.6M-223.3 248.9L38.6 545.1M-610.3 406.2L334.9 261.9M-217.5 248.2L48.0 542.9M-610.7 411.0L340.7 264.5M-205.9 246.8L66.7 538.6M-610.9 413.4L343.7 265.8M-200.2 246.1L75.9 536.4M-611.1 415.8L346.6 267.1M-194.4 245.4L85.0 534.2M-611.3 418.3L349.6 268.4M-188.7 244.7L94.1 532.1M-611.7 423.3L355.6 271.1M-177.4 243.3L112.2 527.9M-611.9 425.8L358.6 272.4M-171.7 242.6L121.1 525.8M-612.1 428.4L361.6 273.8M-166.1 241.9L130.0 523.7M-612.4 431.0L364.7 275.1M-160.5 241.2L138.8 521.7M-612.8 436.2L370.9 277.9M-149.4 239.9L156.3 517.6M-613.0 438.8L374.0 279.3M-143.8 239.2L165.0 515.5M-613.2 441.5L377.2 280.7M-138.3 238.5L173.6 513.5M-613.4 444.2L380.3 282.1M-132.8 237.9L182.1 511.5M-613.9 449.7L386.7 284.9M-121.8 236.5L199.1 507.5M-614.1 452.5L390.0 286.4M-116.4 235.9L207.5 505.6M-614.4 455.3L393.2 287.8M-110.9 235.2L215.8 503.6M-614.6 458.1L396.5 289.3M-105.5 234.6L224.1 501.7M-615.1 463.8L403.1 292.2M-94.8 233.2L240.6 497.8M-615.3 466.8L406.5 293.7M-89.4 232.6L248.7 495.9M-615.5 469.7L409.9 295.2M-84.1 231.9L256.8 494.0M-615.8 472.7L413.3 296.7M-78.8 231.3L264.9 492.1M-616.3 478.7L420.1 299.8M-68.2 230.0L280.8 488.4M-616.5 481.8L423.6 301.3M-62.9 229.4L288.7 486.6M-616.8 484.8L427.1 302.8M-57.7 228.7L296.6 484.7M-617.0 488.0L430.6 304.4M-52.5 228.1L304.4 482.9M-617.5 494.3L437.7 307.6M-42.1 226.8L319.9 479.3M-617.8 497.5L441.3 309.2M-36.9 226.2L327.6 477.5M-618.1 500.8L444.9 310.8M-31.7 225.6L335.2 475.7M-618.3 504.1L448.5 312.4M-26.6 224.9L342.8 473.9M-618.9 510.7L455.9 315.7M-16.4 223.7L357.9 470.4M-619.2 514.1L459.6 317.3M-11.3 223.1L365.3 468.6M-619.5 517.5L463.4 319.0M-6.3 222.5L372.7 466.9M-619.7 521.0L467.1 320.7M-1.2 221.9L380.1 465.2M-620.3 528.0L474.8 324.1M8.8 220.6L394.7 461.7M-620.6 531.6L478.6 325.8M13.8 220.0L402.0 460.0M-620.9 535.2L482.5 327.5M18.8 219.4L409.2 458.3M-621.2 538.8L486.4 329.2M23.8 218.8L416.4 456.7M-621.8 546.2L494.4 332.8M33.7 217.6L430.6 453.3M-622.1 550.0L498.4 334.5M38.6 217.0L437.6 451.7M-622.4 553.8L502.4 336.3M43.5 216.4L444.6 450.0M-622.7 557.7L506.5 338.1M48.3 215.8L451.6 448.4M-623.4 565.5L514.7 341.8M58.1 214.6L465.4 445.2M-623.7 569.5L518.9 343.6M62.9 214.1L472.3 443.6M-624.0 573.5L523.1 345.5M67.7 213.5L479.1 442.0M-624.4 577.6L527.3 347.4M72.5 212.9L485.9 440.4M-625.1 585.9L535.9 351.2M82.0 211.7L499.3 437.2M-625.4 590.1L540.2 353.1M86.8 211.1L506.0 435.7M-625.7 594.4L544.5 355.1M91.5 210.6L512.7 434.1M-626.1 598.7L548.9 357.0M96.3 210.0L519.3 432.6M-626.8 607.5L557.8 361.0M105.6 208.8L532.3 429.5M-627.2 611.9L562.3 363.0M110.3 208.3L538.8 428.0M-627.6 616.5L566.9 365.0M115.0 207.7L545.3 426.5M-627.9 621.1L571.5 367.0M119.6 207.1L551.7 425.0M-628.7 630.4L580.7 371.1M128.9 206.0L564.5 422.0M-629.1 635.1L585.4 373.2M133.5 205.5L570.8 420.5M-629.5 640.0L590.1 375.3M138.0 204.9L577.1 419.0M-629.9 644.8L594.9 377.4M142.6 204.3L583.3 417.6M-630.7 654.8L604.6 381.7M151.7 203.2L595.8 414.7M-631.1 659.8L609.4 383.9M156.2 202.7L601.9 413.2M-631.5 664.9L614.4 386.1M160.7 202.1L608.0 411.8M-632.0 670.1L619.3 388.3M165.2 201.6L614.1 410.4M-632.8 680.7L629.4 392.8M174.2 200.5L626.2 407.5M-633.3 686.1L634.5 395.0M178.6 200.0L632.2 406.1M-633.7 691.6L639.6 397.3M183.1 199.4L638.2 404.7M-634.2 697.1L644.8 399.6M187.5 198.9L644.1 403.3" stroke="#7c838a" stroke-width="0.68" fill="none"/><path d="M-601.2 294.9L191.9 198.3M-601.2 294.9L-634.6 702.8M-601.8 302.5L202.2 202.9M-565.1 290.5L-564.6 686.4M-602.5 310.4L212.9 207.7M-529.8 286.2L-497.2 670.6M-603.2 318.6L223.8 212.5M-495.1 282.0L-432.4 655.4M-603.9 327.1L235.0 217.5M-461.2 277.8L-370.0 640.8M-604.6 336.0L246.6 222.6M-427.8 273.8L-309.8 626.7M-605.3 345.1L258.5 227.9M-395.2 269.8L-251.7 613.1M-606.1 354.7L270.7 233.4M-363.1 265.9L-195.7 600.0M-606.9 364.6L283.3 239.0M-331.7 262.1L-141.6 587.3M-607.8 374.9L296.3 244.7M-300.9 258.3L-89.4 575.1M-608.6 385.6L309.7 250.7M-270.6 254.6L-38.8 563.3M-609.6 396.9L323.6 256.8M-240.9 251.0L10.1 551.8M-610.5 408.6L337.8 263.2M-211.7 247.5L57.4 540.7M-611.5 420.8L352.6 269.7M-183.1 244.0L103.2 530.0M-612.6 433.6L-44.4 342.5M-154.9 240.6L-44.4 342.5M-613.7 446.9L383.5 283.5M-127.3 237.2L190.6 509.5M-614.8 461.0L399.8 290.7M-100.1 233.9L232.4 499.7M-616.0 475.7L416.7 298.2M-73.5 230.7L272.9 490.3M-617.3 491.1L434.1 306.0M-47.3 227.5L312.2 481.1M-618.6 507.4L452.2 314.0M-21.5 224.3L350.4 472.1M-620.0 524.5L470.9 322.3M3.8 221.2L387.4 463.4M-621.5 542.5L490.4 331.0M28.7 218.2L423.5 455.0M-623.1 561.6L510.6 340.0M53.2 215.2L458.5 446.8M-624.7 581.7L531.6 349.3M77.3 212.3L492.6 438.8M-626.5 603.1L553.4 359.0M101.0 209.4L525.8 431.0M-628.3 625.7L576.1 369.1M124.2 206.6L558.1 423.5M-630.3 649.8L599.7 379.6M147.2 203.8L589.6 416.1M-632.4 675.4L624.4 390.5M169.7 201.0L620.2 408.9M-634.6 702.8L650.1 401.9M191.9 198.3L650.1 401.9" stroke="#6c7279" stroke-width="0.85" fill="none"/><path d="M-44.4 342.5L147.6 519.6" stroke="#a03535" stroke-width="1.1"/><path d="M-44.4 342.5L367.8 276.5" stroke="#4fa04f" stroke-width="1.1"/><path d="M47.3 279.7L130.1 267.8L165.2 288.3L169.1 373.8L85.2 389.2L53.6 363.6Z" fill="rgba(158,4,6,0.42)"/><path d="M134.5 349.6L130.1 267.8M134.5 349.6L53.6 363.6M134.5 349.6L169.1 373.8" stroke="#a83030" stroke-width="0.8" fill="none"/><path d="M63.3 330.8L63.1 328.5L63.1 327.9L63.1 325.6L63.2 323.3L63.4 321.1L63.5 320.4L63.8 318.1L64.3 315.9L64.9 313.7L65.1 313.1L65.9 311.0L66.7 308.9L67.7 306.8L68.0 306.2L69.0 304.3L70.2 302.4L70.6 301.8L71.9 300.0L73.2 298.3L73.7 297.8L75.1 296.1L76.7 294.6L77.2 294.2L78.8 292.7L79.3 292.3L81.0 291.0L81.5 290.6L83.2 289.4L83.8 289.1L85.5 288.1L86.1 287.7L87.8 286.8L88.4 286.6L90.2 285.8L90.7 285.6L91.3 285.3L91.9 285.1L93.5 284.5L94.1 284.3L94.7 284.1L95.4 284.0L96.8 283.6L97.4 283.4L98.0 283.3L98.6 283.2L99.2 283.1L99.9 282.9L100.8 282.8L101.4 282.7L102.0 282.6L102.6 282.5L103.2 282.5L103.8 282.4L104.4 282.4L105.0 282.3L105.6 282.3L106.3 282.3L106.9 282.3L107.5 282.3L108.1 282.3L108.7 282.3L109.3 282.3L109.9 282.3L110.5 282.4L111.4 282.4L112.1 282.5L112.7 282.5L113.4 282.6L114.0 282.7L114.6 282.8L116.0 283.0L116.7 283.2L117.3 283.3L117.9 283.4L119.6 283.8L120.2 284.0L120.8 284.2L122.6 284.8L123.2 285.0L123.8 285.2L125.6 285.9L126.2 286.2L128.1 287.1L128.7 287.4L130.5 288.4L131.1 288.7L132.9 289.9L133.4 290.2L135.2 291.5L135.7 291.9L137.4 293.3L139.0 294.7L139.5 295.2L141.1 296.8L142.5 298.5L142.9 299.0L144.3 300.7L145.6 302.6L145.9 303.1L147.1 305.1L148.2 307.0L149.2 309.1L149.4 309.7L150.3 311.8L151.0 313.9L151.6 316.1L151.8 316.7L152.3 318.9L152.6 321.2L152.9 323.4L152.9 324.1L153.0 326.3L153.0 328.6L152.8 330.8L152.6 333.1L152.5 333.7L152.1 335.9L151.6 338.1L151.4 338.8L150.8 340.9L150.0 343.0L149.1 345.1L148.8 345.7L147.8 347.7L146.8 349.6L146.4 350.2L145.2 352.0L143.9 353.8L143.4 354.3L142.1 356.0L140.6 357.6L140.1 358.1L138.6 359.5L138.0 360.0L136.5 361.3L135.9 361.8L134.2 363.0L133.6 363.4L132.0 364.5L131.3 364.9L129.7 365.8L129.0 366.1L128.3 366.5L126.7 367.2L126.1 367.5L125.3 367.8L123.8 368.4L123.2 368.6L122.4 368.9L121.7 369.1L120.4 369.5L119.7 369.7L119.0 369.9L118.3 370.0L117.5 370.2L116.7 370.3L115.9 370.5L115.2 370.6L114.5 370.7L113.8 370.8L113.1 370.9L112.4 370.9L111.6 371.0L110.9 371.0L110.1 371.1L109.4 371.1L108.7 371.1L108.0 371.1L107.2 371.1L106.5 371.1L105.8 371.0L105.0 371.0L104.2 370.9L103.4 370.8L102.7 370.7L101.9 370.6L101.2 370.5L99.9 370.3L99.1 370.1L98.4 370.0L97.7 369.8L96.1 369.4L95.3 369.2L94.6 369.0L92.9 368.4L92.2 368.1L91.5 367.9L89.7 367.1L89.1 366.8L87.3 365.9L86.6 365.6L84.8 364.5L84.2 364.1L82.4 363.0L81.8 362.6L80.1 361.3L79.6 360.8L77.9 359.4L76.3 357.9L75.8 357.4L74.3 355.7L72.9 354.0L72.4 353.5L71.1 351.7L69.8 349.8L69.5 349.2L68.3 347.2L67.3 345.2L66.4 343.1L66.2 342.5L65.4 340.4L64.7 338.2L64.2 336.0L64.0 335.3L63.6 333.1Z" fill="url(#sph)"/><path d="M105.7 283.9L106.1 284.2L106.6 284.6L107.0 284.9L107.5 285.3L107.9 285.7L108.4 286.2L108.8 286.6L109.3 287.1L109.7 287.7L110.2 288.2L110.6 288.8L111.1 289.4L111.5 290.1L112.0 290.7L112.4 291.4L112.9 292.2L113.3 292.9L113.7 293.7L114.2 294.5L114.6 295.3L115.0 296.1L115.4 297.0L115.9 297.9L116.3 298.8L116.7 299.7L117.1 300.7L117.5 301.6L117.8 302.6L118.2 303.6L118.6 304.6L119.0 305.7L119.3 306.7L119.7 307.8L120.0 308.9L120.3 310.0L120.7 311.1L121.0 312.2L121.3 313.3L121.6 314.5L121.9 315.6L122.2 316.8L122.4 317.9L122.7 319.1L122.9 320.3L123.2 321.5L123.4 322.6L123.6 323.8L123.8 325.0L124.0 326.2L124.2 327.4L124.4 328.6L124.5 329.8L124.7 331.0L124.8 332.1L124.9 333.3L125.1 334.5L125.2 335.7L125.2 336.8L125.3 338.0L125.4 339.1L125.4 340.2L125.5 341.4L125.5 342.5L125.5 343.6L125.5 344.7L125.5 345.7L125.5 346.8L125.5 347.8L125.4 348.9L125.4 349.9L125.3 350.9L125.2 351.9L125.1 352.8L125.0 353.7L124.9 354.7L124.7 355.6L124.6 356.4L124.5 357.3L124.3 358.1L124.1 358.9L123.9 359.7L123.7 360.5L123.5 361.2L123.3 361.9L123.1 362.6L122.8 363.3L122.6 363.9L122.3 364.5L122.1 365.1L121.8 365.6L121.5 366.1L121.2 366.6L120.9 367.1L120.6 367.5L120.3 367.9L119.9 368.3L119.6 368.7L119.3 369.0L118.9 369.3L118.5 369.5L118.2 369.7L117.8 369.9L117.4 370.1L117.0 370.2L116.7 370.3" stroke="#1a1010" stroke-width="1.2" fill="none"/><path d="M47.3 279.7L130.1 267.8L165.2 288.3L169.1 373.8L85.2 389.2L53.6 363.6Z" fill="rgba(158,4,6,0.42)"/><path d="M47.3 279.7L130.1 267.8L165.2 288.3L169.1 373.8L85.2 389.2L53.6 363.6ZM79.3 301.4L47.3 279.7M79.3 301.4L165.2 288.3M79.3 301.4L85.2 389.2" stroke="#b02a2a" stroke-width="0.9" fill="none"/><path d="M183.1 269.6L281.9 255.1L336.2 280.3L337.1 587.8L242.1 614.1L195.4 570.6Z" fill="rgba(158,4,6,0.42)"/><path d="M286.7 547.2L281.9 255.1M286.7 547.2L195.4 570.6M286.7 547.2L337.1 587.8" stroke="#a83030" stroke-width="0.8" fill="none"/><path d="M207.2 423.1L207.3 414.9L207.3 413.9L207.4 405.8L207.8 397.8L208.3 389.8L208.9 381.8L209.7 374.1L210.7 366.4L211.8 358.9L211.9 358.1L213.2 350.9L214.6 343.8L216.1 337.0L217.8 330.4L219.6 324.2L221.6 318.2L221.8 317.6L223.8 312.0L226.0 306.7L228.3 301.8L228.5 301.3L230.9 296.8L233.4 292.6L235.9 288.9L236.2 288.6L238.8 285.3L239.1 285.0L241.7 282.2L242.0 282.0L244.6 279.7L244.9 279.5L247.6 277.6L247.8 277.5L248.1 277.3L248.4 277.2L250.9 275.9L251.2 275.8L251.4 275.7L251.7 275.6L252.0 275.5L254.2 274.8L254.4 274.7L254.7 274.7L254.9 274.6L255.2 274.6L255.4 274.5L255.7 274.5L256.0 274.4L256.2 274.4L256.5 274.3L256.8 274.3L257.1 274.3L257.4 274.3L257.7 274.2L258.1 274.2L258.4 274.2L258.7 274.2L259.0 274.2L259.3 274.2L259.6 274.2L259.9 274.2L260.2 274.2L260.5 274.2L260.8 274.3L261.1 274.3L261.4 274.3L261.7 274.4L262.0 274.4L262.2 274.4L262.5 274.5L262.7 274.5L263.0 274.6L263.2 274.7L265.4 275.2L265.7 275.3L266.0 275.4L266.3 275.5L266.5 275.6L269.1 276.8L269.4 277.0L269.7 277.1L269.9 277.2L272.7 279.0L272.9 279.2L275.7 281.4L276.0 281.6L278.8 284.3L279.0 284.6L281.8 287.8L282.0 288.1L284.7 291.7L287.4 295.8L289.9 300.2L290.2 300.6L292.7 305.5L295.1 310.7L297.4 316.2L297.6 316.8L299.8 322.7L301.9 328.8L303.8 335.3L305.7 342.0L307.4 349.0L308.9 356.2L309.1 357.0L310.5 364.4L311.8 371.9L312.9 379.7L313.9 387.5L314.8 395.4L315.5 403.4L316.0 411.5L316.4 419.6L316.4 420.6L316.6 428.7L316.7 436.8L316.6 444.8L316.4 452.8L316.0 460.7L315.4 468.5L314.7 476.1L314.6 477.2L313.8 484.7L312.8 492.0L311.7 499.1L310.5 506.0L309.1 512.7L308.9 513.7L307.4 520.1L305.7 526.2L304.0 532.1L302.2 537.6L301.9 538.5L299.9 543.7L297.9 548.6L297.6 549.4L295.5 553.9L293.3 558.1L292.9 558.8L290.6 562.5L288.3 565.9L287.9 566.5L285.6 569.5L285.2 570.0L282.9 572.5L282.4 572.9L282.0 573.3L279.7 575.3L279.3 575.7L278.8 576.0L276.6 577.6L276.2 577.8L275.7 578.1L275.2 578.4L273.3 579.3L272.9 579.5L272.5 579.7L272.0 579.9L271.5 580.0L271.0 580.2L270.5 580.3L270.0 580.5L268.9 580.7L268.5 580.8L268.0 580.9L267.6 581.0L267.2 581.0L266.8 581.1L266.3 581.1L265.9 581.2L265.5 581.2L265.0 581.2L264.6 581.2L264.1 581.2L263.7 581.1L263.3 581.1L262.9 581.1L262.4 581.0L262.0 580.9L260.9 580.7L260.4 580.6L259.8 580.5L259.3 580.4L258.9 580.3L258.4 580.1L258.0 579.9L257.5 579.8L255.6 578.9L255.1 578.7L254.6 578.5L254.1 578.2L251.9 576.8L251.4 576.5L250.9 576.2L248.6 574.3L248.1 573.9L247.7 573.5L245.2 571.1L244.8 570.6L242.3 567.8L241.9 567.3L239.4 564.0L237.0 560.4L236.6 559.7L234.2 555.7L231.9 551.2L231.5 550.5L229.3 545.7L227.1 540.6L226.7 539.7L224.6 534.2L222.6 528.5L220.8 522.4L219.0 516.1L218.7 515.1L217.0 508.4L215.5 501.6L214.0 494.5L212.7 487.2L211.5 479.8L211.4 478.7L210.4 471.1L209.5 463.3L208.7 455.4L208.1 447.4L207.7 439.3L207.4 431.2Z" fill="url(#ell)" fill-opacity="0.92"/><path d="M258.7 274.9L259.4 275.3L260.1 275.8L260.8 276.4L261.5 277.2L262.2 278.0L262.9 279.0L263.6 280.1L264.3 281.3L265.0 282.6L265.7 284.0L266.4 285.6L267.1 287.2L267.8 289.0L268.4 290.8L269.1 292.8L269.8 294.9L270.5 297.1L271.2 299.3L271.8 301.7L272.5 304.2L273.1 306.7L273.8 309.4L274.4 312.1L275.0 315.0L275.6 317.9L276.2 320.9L276.8 324.0L277.4 327.2L278.0 330.4L278.5 333.8L279.1 337.1L279.6 340.6L280.1 344.1L280.7 347.7L281.1 351.4L281.6 355.1L282.1 358.9L282.5 362.7L283.0 366.5L283.4 370.4L283.8 374.4L284.2 378.4L284.6 382.4L284.9 386.4L285.3 390.5L285.6 394.6L285.9 398.8L286.2 402.9L286.4 407.1L286.7 411.2L286.9 415.4L287.1 419.6L287.3 423.8L287.5 428.0L287.6 432.2L287.8 436.3L287.9 440.5L288.0 444.7L288.1 448.8L288.2 452.9L288.2 457.0L288.2 461.1L288.2 465.1L288.2 469.1L288.2 473.1L288.1 477.0L288.1 480.9L288.0 484.8L287.9 488.6L287.8 492.3L287.6 496.0L287.5 499.7L287.3 503.3L287.1 506.8L286.9 510.3L286.7 513.7L286.4 517.0L286.2 520.3L285.9 523.5L285.6 526.6L285.3 529.7L285.0 532.7L284.6 535.6L284.3 538.4L283.9 541.1L283.5 543.8L283.1 546.4L282.7 548.9L282.3 551.3L281.9 553.6L281.4 555.8L281.0 558.0L280.5 560.0L280.0 562.0L279.5 563.8L279.0 565.6L278.5 567.3L278.0 568.8L277.5 570.3L276.9 571.7L276.4 573.0L275.8 574.2L275.2 575.3L274.7 576.2L274.1 577.1L273.5 577.9L272.9 578.6L272.3 579.2L271.7 579.7L271.1 580.1L270.5 580.4" stroke="#20a020" stroke-width="1.1" fill="none"/><path d="M183.1 269.6L281.9 255.1L336.2 280.3L337.1 587.8L242.1 614.1L195.4 570.6Z" fill="rgba(158,4,6,0.42)"/><path d="M183.1 269.6L281.9 255.1L336.2 280.3L337.1 587.8L242.1 614.1L195.4 570.6ZM233.0 296.8L183.1 269.6M233.0 296.8L336.2 280.3M233.0 296.8L242.1 614.1" stroke="#b02a2a" stroke-width="0.9" fill="none"/><g stroke="#5c5c5c" stroke-width="1.100" fill="none"><path d="M33.600 767L33.600 741.200M33.600 767L56.600 762.300M33.600 767L47.700 775.300"/></g></svg>
<div class="a" style="left:49px;top:152.5px;width:85.5px;height:17px;background:#9db4d4;border-radius:0 0 4px 0"></div>
<div class="a" style="left:124px;top:155px;width:1px;height:13px;background:#2b3c55;"></div>
<span class="t" style="left:57.00px;top:155px;font-size:11px;line-height:12px;height:12px;color:#0a0f18;font-weight:bold;transform:scaleX(0.9796);">Perspective</span>
<svg class="a" style="left:126px;top:158px" width="8" height="6"><path d="M0.500 0.500H7.500L4 4.500Z" fill="#111"/></svg>
<div class="a" style="left:744px;top:152.5px;width:1px;height:800px;background:#d9dce2;"></div>
<span class="t" style="left:87.80px;top:883px;font-size:12px;line-height:14px;height:14px;color:#555;margin-left:-3.00px;">z</span>
<span class="t" style="left:111.50px;top:903px;font-size:12px;line-height:14px;height:14px;color:#555;margin-left:-3.00px;">y</span>
<span class="t" style="left:102.00px;top:918px;font-size:12px;line-height:14px;height:14px;color:#555;margin-left:-3.00px;">x</span>
<svg class="a" style="left:40px;top:952px" width="240" height="22" viewBox="40 952 240 22"><path d="M198.3 952.500L204.3 970.500Q205.10000000000002 972.500 207.3 972.500H238.3Q240.8 972.500 240.8 970V952.500Z" fill="#d9dadc" stroke="#cdd0d5" stroke-width=".6"/><path d="M156.7 952.500L162.7 970.500Q163.5 972.500 165.7 972.500H195.0Q197.5 972.500 197.5 970V952.500Z" fill="#d9dadc" stroke="#cdd0d5" stroke-width=".6"/><path d="M120.8 952.500L126.8 970.500Q127.6 972.500 129.8 972.500H153.3Q155.8 972.500 155.8 970V952.500Z" fill="#d9dadc" stroke="#cdd0d5" stroke-width=".6"/><path d="M50 952.500L56 970.500Q56.8 972.500 59 972.500H117.8Q120.3 972.500 120.3 970V952.500Z" fill="#f1f2f5" stroke="#cdd0d5" stroke-width=".6"/><rect x="246.700" y="953" width="21.600" height="19.500" rx="2" fill="#eef0f3" stroke="#dcdfe4" stroke-width=".7"/><path d="M256 960V968M252 964H260" stroke="#888" stroke-width="1.6"/><path d="M256 961.500V966.500M253.500 964H258.500" stroke="#f4f4f4" stroke-width=".6"/></svg>
<span class="t" style="left:59.00px;top:957px;font-size:11px;line-height:12px;height:12px;color:#2a2a2a;transform:scaleX(0.9832);">Perspective</span>
<span class="t" style="left:131.00px;top:957px;font-size:11px;line-height:12px;height:12px;color:#2a2a2a;transform:scaleX(1.0714);">Top</span>
<span class="t" style="left:167.00px;top:957px;font-size:11px;line-height:12px;height:12px;color:#2a2a2a;transform:scaleX(1.0323);">Front</span>
<span class="t" style="left:208.50px;top:957px;font-size:11px;line-height:12px;height:12px;color:#2a2a2a;transform:scaleX(1.0515);">Right</span>
<div class="a" style="left:11px;top:983.5px;width:11px;height:11px;border:1px solid #4a4a4a;background:#fff"></div><svg class="a" style="left:11px;top:983.5px" width="11" height="11" viewBox="0 0 11 11"><path d="M2.3 5.6L4.6 7.9L8.9 3" stroke="#3a3a3a" stroke-width="1.05" fill="none"/></svg>
<span class="t" style="left:25.00px;top:983px;font-size:11px;line-height:12px;height:12px;color:#222;transform:scaleX(0.9197);">End</span>
<div class="a" style="left:50px;top:983.5px;width:11px;height:11px;border:1px solid #4a4a4a;background:#fff"></div><svg class="a" style="left:50px;top:983.5px" width="11" height="11" viewBox="0 0 11 11"><path d="M2.3 5.6L4.6 7.9L8.9 3" stroke="#3a3a3a" stroke-width="1.05" fill="none"/></svg>
<span class="t" style="left:65.00px;top:983px;font-size:11px;line-height:12px;height:12px;color:#222;transform:scaleX(0.9857);">Near</span>
<div class="a" style="left:95px;top:983.5px;width:11px;height:11px;border:1px solid #4a4a4a;background:#fff"></div><svg class="a" style="left:95px;top:983.5px" width="11" height="11" viewBox="0 0 11 11"><path d="M2.3 5.6L4.6 7.9L8.9 3" stroke="#3a3a3a" stroke-width="1.05" fill="none"/></svg>
<span class="t" style="left:109.50px;top:983px;font-size:11px;line-height:12px;height:12px;color:#222;transform:scaleX(0.9772);">Point</span>
<div class="a" style="left:141.5px;top:983.5px;width:11px;height:11px;border:1px solid #4a4a4a;background:#fff"></div><svg class="a" style="left:141.5px;top:983.5px" width="11" height="11" viewBox="0 0 11 11"><path d="M2.3 5.6L4.6 7.9L8.9 3" stroke="#3a3a3a" stroke-width="1.05" fill="none"/></svg>
<span class="t" style="left:156.00px;top:983px;font-size:11px;line-height:12px;height:12px;color:#222;transform:scaleX(1.0720);">Mid</span>
<div class="a" style="left:182px;top:983.5px;width:11px;height:11px;border:1px solid #4a4a4a;background:#fff"></div>
<span class="t" style="left:196.50px;top:983px;font-size:11px;line-height:12px;height:12px;color:#222;transform:scaleX(0.9168);">Cen</span>
<div class="a" style="left:222px;top:983.5px;width:11px;height:11px;border:1px solid #4a4a4a;background:#fff"></div><svg class="a" style="left:222px;top:983.5px" width="11" height="11" viewBox="0 0 11 11"><path d="M2.3 5.6L4.6 7.9L8.9 3" stroke="#3a3a3a" stroke-width="1.05" fill="none"/></svg>
<span class="t" style="left:236.50px;top:983px;font-size:11px;line-height:12px;height:12px;color:#222;transform:scaleX(1.0222);">Int</span>
<div class="a" style="left:255px;top:983.5px;width:11px;height:11px;border:1px solid #4a4a4a;background:#fff"></div><svg class="a" style="left:255px;top:983.5px" width="11" height="11" viewBox="0 0 11 11"><path d="M2.3 5.6L4.6 7.9L8.9 3" stroke="#3a3a3a" stroke-width="1.05" fill="none"/></svg>
<span class="t" style="left:270.00px;top:983px;font-size:11px;line-height:12px;height:12px;color:#222;transform:scaleX(0.9254);">Perp</span>
<div class="a" style="left:298.5px;top:983.5px;width:11px;height:11px;border:1px solid #4a4a4a;background:#fff"></div>
<span class="t" style="left:313.50px;top:983px;font-size:11px;line-height:12px;height:12px;color:#222;transform:scaleX(0.9304);">Tan</span>
<div class="a" style="left:337.5px;top:983.5px;width:11px;height:11px;border:1px solid #4a4a4a;background:#fff"></div><svg class="a" style="left:337.5px;top:983.5px" width="11" height="11" viewBox="0 0 11 11"><path d="M2.3 5.6L4.6 7.9L8.9 3" stroke="#3a3a3a" stroke-width="1.05" fill="none"/></svg>
<span class="t" style="left:352.50px;top:983px;font-size:11px;line-height:12px;height:12px;color:#222;transform:scaleX(0.9849);">Quad</span>
<div class="a" style="left:386px;top:983.5px;width:11px;height:11px;border:1px solid #4a4a4a;background:#fff"></div>
<span class="t" style="left:400.50px;top:983px;font-size:11px;line-height:12px;height:12px;color:#222;transform:scaleX(1.0165);">Knot</span>
<div class="a" style="left:430px;top:983.5px;width:11px;height:11px;border:1px solid #4a4a4a;background:#fff"></div><svg class="a" style="left:430px;top:983.5px" width="11" height="11" viewBox="0 0 11 11"><path d="M2.3 5.6L4.6 7.9L8.9 3" stroke="#3a3a3a" stroke-width="1.05" fill="none"/></svg>
<span class="t" style="left:444.50px;top:983px;font-size:11px;line-height:12px;height:12px;color:#222;transform:scaleX(0.9941);">Vertex</span>
<div class="a" style="left:483px;top:983.5px;width:11px;height:11px;border:1px solid #c4c4c4;background:#ececec"></div>
<span class="t" style="left:497.50px;top:983px;font-size:11px;line-height:12px;height:12px;color:#222;transform:scaleX(0.9932);">Project</span>
<div class="a" style="left:546.5px;top:983.5px;width:11px;height:11px;border:1px solid #c4c4c4;background:#ececec"></div>
<span class="t" style="left:561.50px;top:983px;font-size:11px;line-height:12px;height:12px;color:#222;transform:scaleX(1.0086);">Disable</span>
<div class="a" style="left:1px;top:1026px;width:954px;height:17px;background:#f0f0f0;border-top:1px solid #d4d4d4"></div>
<div class="a" style="left:45px;top:1027px;width:1px;height:16px;background:#d0d0d0;"></div>
<div class="a" style="left:120px;top:1027px;width:1px;height:16px;background:#d0d0d0;"></div>
<div class="a" style="left:200.5px;top:1027px;width:1px;height:16px;background:#d0d0d0;"></div>
<div class="a" style="left:280.5px;top:1027px;width:1px;height:16px;background:#d0d0d0;"></div>
<div class="a" style="left:358px;top:1027px;width:1px;height:16px;background:#d0d0d0;"></div>
<div class="a" style="left:511.5px;top:1027px;width:1px;height:16px;background:#d0d0d0;"></div>
<div class="a" style="left:570px;top:1027px;width:1px;height:16px;background:#d0d0d0;"></div>
<div class="a" style="left:609.5px;top:1027px;width:1px;height:16px;background:#d0d0d0;"></div>
<div class="a" style="left:651px;top:1027px;width:1px;height:16px;background:#d0d0d0;"></div>
<div class="a" style="left:692px;top:1027px;width:1px;height:16px;background:#d0d0d0;"></div>
<div class="a" style="left:759.5px;top:1027px;width:1px;height:16px;background:#d0d0d0;"></div>
<div class="a" style="left:811.5px;top:1027px;width:1px;height:16px;background:#d0d0d0;"></div>
<div class="a" style="left:894.5px;top:1027px;width:1px;height:16px;background:#d0d0d0;"></div>
<div class="a" style="left:929.5px;top:1027px;width:1px;height:16px;background:#d0d0d0;"></div>
<div class="a" style="left:652px;top:1027px;width:40px;height:16px;background:#e2effc;"></div>
<div class="a" style="left:693px;top:1027px;width:66.5px;height:16px;background:#e2effc;"></div>
<div class="a" style="left:760.5px;top:1027px;width:51px;height:16px;background:#e2effc;"></div>
<span class="t" style="left:5.00px;top:1028px;font-size:11px;line-height:12px;height:12px;color:#333;transform:scaleX(0.9424);">CPlane</span>
<span class="t" style="left:62.50px;top:1028px;font-size:11px;line-height:12px;height:12px;color:#333;transform:scaleX(0.9716);">x 81.167</span>
<span class="t" style="left:141.50px;top:1028px;font-size:11px;line-height:12px;height:12px;color:#333;transform:scaleX(0.9716);">y 65.830</span>
<span class="t" style="left:223.50px;top:1028px;font-size:11px;line-height:12px;height:12px;color:#333;transform:scaleX(0.9562);">z 0.000</span>
<span class="t" style="left:291.50px;top:1028px;font-size:11px;line-height:12px;height:12px;color:#333;transform:scaleX(1.0656);">Millimeters</span>
<span class="t" style="left:375.00px;top:1028px;font-size:11px;line-height:12px;height:12px;color:#333;transform:scaleX(1.0473);">Default</span>
<span class="t" style="left:516.50px;top:1028px;font-size:11px;line-height:12px;height:12px;color:#333;transform:scaleX(0.9793);">Grid Snap</span>
<span class="t" style="left:576.00px;top:1028px;font-size:11px;line-height:12px;height:12px;color:#333;transform:scaleX(1.0179);">Ortho</span>
<span class="t" style="left:615.50px;top:1028px;font-size:11px;line-height:12px;height:12px;color:#333;transform:scaleX(0.9750);">Planar</span>
<span class="t" style="left:656.00px;top:1028px;font-size:11px;line-height:12px;height:12px;color:#000;font-weight:bold;transform:scaleX(0.9641);">Osnap</span>
<span class="t" style="left:696.50px;top:1028px;font-size:11px;line-height:12px;height:12px;color:#000;font-weight:bold;transform:scaleX(0.9846);">SmartTrack</span>
<span class="t" style="left:763.50px;top:1028px;font-size:11px;line-height:12px;height:12px;color:#000;font-weight:bold;transform:scaleX(0.9999);">Gumball</span>
<span class="t" style="left:816.50px;top:1028px;font-size:11px;line-height:12px;height:12px;color:#333;transform:scaleX(1.0105);">Record History</span>
<span class="t" style="left:900.50px;top:1028px;font-size:11px;line-height:12px;height:12px;color:#333;transform:scaleX(1.0228);">Filter</span>
<div class="a" style="left:362.5px;top:1029.5px;width:10px;height:10px;background:#000;"></div>
<div class="a" style="left:932.5px;top:1027px;width:6px;height:16px;overflow:hidden"><span class="t" style="left:0.00px;top:1px;font-size:11px;line-height:12px;height:12px;color:#333;transform:scaleX(0.8812);">C</span></div>
<div class="a" style="left:750.5px;top:153px;width:202.5px;height:818px;background:#f6f7f9;border:1px solid #e0e3e8"></div>
<div class="a" style="left:751px;top:153px;width:202px;height:25px;background:#eceef2;"></div>
<svg class="a" style="left:751px;top:154px" width="202" height="54" viewBox="751 154 202 54"><path d="M752 180V157H772L782 180Z" fill="#f6f7f9"/><path d="M773.5 158.500H799.5L809.5 178H783.5Z" fill="#dadbde" stroke="#cfd1d5" stroke-width=".5"/><path d="M804.75 158.500H830.75L840.75 178H814.75Z" fill="#dadbde" stroke="#cfd1d5" stroke-width=".5"/><path d="M836 158.500H862L872 178H846Z" fill="#dadbde" stroke="#cfd1d5" stroke-width=".5"/><path d="M867 158.500H893L903 178H877Z" fill="#dadbde" stroke="#cfd1d5" stroke-width=".5"/><path d="M899.75 158.500H925.75L935.75 178H909.75Z" fill="#dadbde" stroke="#cfd1d5" stroke-width=".5"/><path d="M931 158.500H957L967 178H941Z" fill="#dadbde" stroke="#cfd1d5" stroke-width=".5"/><path d="M761 168.700L768.00 168.70A7 7 0 0 1 765.36 174.17Z" fill="#e02020"/><path d="M761 168.700L765.36 174.17A7 7 0 0 1 759.44 175.52Z" fill="#f0a010"/><path d="M761 168.700L759.44 175.52A7 7 0 0 1 754.69 171.74Z" fill="#f0f010"/><path d="M761 168.700L754.69 171.74A7 7 0 0 1 754.69 165.66Z" fill="#30c030"/><path d="M761 168.700L754.69 165.66A7 7 0 0 1 759.44 161.88Z" fill="#20c0e0"/><path d="M761 168.700L759.44 161.88A7 7 0 0 1 765.36 163.23Z" fill="#3040e0"/><path d="M761 168.700L765.36 163.23A7 7 0 0 1 768.00 168.70Z" fill="#c030d0"/><circle cx="761" cy="168.700" r="3" fill="#fff"/><circle cx="761" cy="168.700" r="7" fill="none" stroke="#222" stroke-width=".8"/><path d="M785 163L793 161L801 164L793 168Z" fill="#e85020" stroke="#801800" stroke-width=".6"/><path d="M785 166L793 171L801 167V170L793 175L785 170Z" fill="#2a4ab8" stroke="#0a1a60" stroke-width=".5"/><path d="M785 163V166L793 171V168Z" fill="#f4f4f4" stroke="#666" stroke-width=".4"/><path d="M801 164V167L793 171V168Z" fill="#d83018"/><circle cx="823" cy="170" r="5.800" fill="#2848c0" stroke="#0a1a60" stroke-width=".6"/><circle cx="821" cy="168" r="2" fill="#9ab0f0"/><path d="M824 163L829 161V166" fill="none" stroke="#223" stroke-width="1.300"/><path d="M850 174L859 163L861.500 165L853 176Z" fill="#f4f4f4" stroke="#555" stroke-width=".7"/><path d="M855 168L858 171" stroke="#e03020" stroke-width="2.200"/><path d="M848.500 176.500L850 174L853 176Z" fill="#333"/><path d="M879 175V164H884L885.500 166H892V175Z" fill="#e8b020" stroke="#805800" stroke-width=".6"/><path d="M879 175L882 168.500H895L892 175Z" fill="#f8d860" stroke="#805800" stroke-width=".6"/><rect x="911.500" y="162" width="14" height="12.500" fill="#3050c0" stroke="#101850" stroke-width=".8"/><rect x="913.500" y="164" width="10" height="7" fill="#9ab8f8"/><path d="M917 166Q918.700 164.500 920 166Q920.500 167.500 918.700 168.500V169.500" stroke="#fff" stroke-width="1" fill="none"/><circle cx="950" cy="169" r="4" fill="none" stroke="#c4c6ca" stroke-width="2.500" stroke-dasharray="2 1.200"/><rect x="754.500" y="180.500" width="23" height="24" fill="#cfe2f8" stroke="#7aa8dc" stroke-width=".8"/><path d="M757.500 188.500H760.500L762 186H770L771.500 188.500H774.500V199.500H757.500Z" fill="#333"/><circle cx="766" cy="194" r="4" fill="#555" stroke="#888" stroke-width=".8"/><circle cx="766" cy="194" r="2" fill="#222"/><rect x="781.500" y="181.500" width="23" height="22" fill="#ddd" stroke="#c8c8c8" stroke-width=".5"/><rect x="784" y="185" width="18" height="15" fill="#8a98a8" stroke="#444" stroke-width=".6"/><rect x="786" y="187.500" width="14" height="10" fill="#fff" stroke="#e03030" stroke-width="1"/><rect x="808.500" y="181.500" width="23" height="22" fill="#e0e0e0" stroke="#c8c8c8" stroke-width=".5"/><circle cx="816" cy="197" r="5" fill="#2848c0" stroke="#0a1a60" stroke-width=".5"/><circle cx="822" cy="190" r="3.800" fill="#2848c0" stroke="#0a1a60" stroke-width=".5"/><circle cx="827" cy="185.500" r="2.600" fill="#2848c0" stroke="#0a1a60" stroke-width=".5"/><circle cx="814.500" cy="195.500" r="1.700" fill="#a0b4f0"/><circle cx="821" cy="189" r="1.300" fill="#a0b4f0"/></svg>
<span class="t" style="left:756.00px;top:213px;font-size:13px;line-height:15px;height:15px;color:#2a2a2a;transform:scaleX(1.0628);">Viewport</span>
<span class="t" style="left:756.00px;top:315px;font-size:13px;line-height:15px;height:15px;color:#2a2a2a;transform:scaleX(0.9625);">Camera</span>
<span class="t" style="left:756.00px;top:476px;font-size:13px;line-height:15px;height:15px;color:#2a2a2a;transform:scaleX(0.9965);">Target</span>
<span class="t" style="left:756.00px;top:578px;font-size:13px;line-height:15px;height:15px;color:#2a2a2a;transform:scaleX(1.0165);">Wallpaper</span>
<div class="a" style="left:770px;top:233.0px;width:82.5px;height:19px;background:#fff;"></div>
<div class="a" style="left:853.5px;top:233.0px;width:99px;height:19px;background:#fff;"></div>
<div class="a" style="left:770px;top:251.7px;width:183px;height:0.8px;background:#ececec;"></div>
<span class="t" style="left:774.50px;top:236px;font-size:11px;line-height:12px;height:12px;color:#1a1a1a;transform:scaleX(1.0431);">Title</span>
<span class="t" style="left:856.25px;top:236px;font-size:11px;line-height:12px;height:12px;color:#1a1a1a;transform:scaleX(0.9701);">Perspective</span>
<div class="a" style="left:770px;top:252.5px;width:82.5px;height:19px;background:#fff;"></div>
<div class="a" style="left:853.5px;top:252.5px;width:99px;height:19px;background:#e9e9e9;"></div>
<div class="a" style="left:770px;top:271.2px;width:183px;height:0.8px;background:#ececec;"></div>
<span class="t" style="left:774.50px;top:256px;font-size:11px;line-height:12px;height:12px;color:#9a9a9a;transform:scaleX(1.0581);">Width</span>
<span class="t" style="left:856.25px;top:256px;font-size:11px;line-height:12px;height:12px;color:#9a9a9a;transform:scaleX(0.9945);">926</span>
<div class="a" style="left:770px;top:271.8px;width:82.5px;height:19px;background:#fff;"></div>
<div class="a" style="left:853.5px;top:271.8px;width:99px;height:19px;background:#e9e9e9;"></div>
<div class="a" style="left:770px;top:290.5px;width:183px;height:0.8px;background:#ececec;"></div>
<span class="t" style="left:774.50px;top:275px;font-size:11px;line-height:12px;height:12px;color:#9a9a9a;transform:scaleX(1.0379);">Height</span>
<span class="t" style="left:856.25px;top:275px;font-size:11px;line-height:12px;height:12px;color:#9a9a9a;transform:scaleX(0.9911);">1066</span>
<div class="a" style="left:770px;top:291.5px;width:82.5px;height:19px;background:#fff;"></div>
<div class="a" style="left:853.5px;top:291.5px;width:99px;height:19px;background:#fff;"></div>
<div class="a" style="left:770px;top:310.2px;width:183px;height:0.8px;background:#ececec;"></div>
<span class="t" style="left:774.50px;top:295px;font-size:11px;line-height:12px;height:12px;color:#1a1a1a;transform:scaleX(1.0222);">Projection</span>
<span class="t" style="left:856.25px;top:295px;font-size:11px;line-height:12px;height:12px;color:#1a1a1a;transform:scaleX(0.9701);">Perspective</span>
<div class="a" style="left:770px;top:335.0px;width:82.5px;height:19px;background:#fff;"></div>
<div class="a" style="left:853.5px;top:335.0px;width:99px;height:19px;background:#fff;"></div>
<div class="a" style="left:770px;top:353.7px;width:183px;height:0.8px;background:#ececec;"></div>
<span class="t" style="left:774.50px;top:338px;font-size:11px;line-height:12px;height:12px;color:#1a1a1a;transform:scaleX(0.9497);">Lens Length</span>
<span class="t" style="left:856.25px;top:338px;font-size:11px;line-height:12px;height:12px;color:#1a1a1a;transform:scaleX(0.9576);">50.0</span>
<div class="a" style="left:770px;top:354.5px;width:82.5px;height:19px;background:#fff;"></div>
<div class="a" style="left:853.5px;top:354.5px;width:99px;height:19px;background:#fff;"></div>
<div class="a" style="left:770px;top:373.2px;width:183px;height:0.8px;background:#ececec;"></div>
<span class="t" style="left:774.50px;top:358px;font-size:11px;line-height:12px;height:12px;color:#1a1a1a;transform:scaleX(1.0252);">Rotation</span>
<span class="t" style="left:856.25px;top:358px;font-size:11px;line-height:12px;height:12px;color:#1a1a1a;transform:scaleX(0.9483);">0.0</span>
<div class="a" style="left:770px;top:374.25px;width:82.5px;height:19px;background:#fff;"></div>
<div class="a" style="left:853.5px;top:374.25px;width:99px;height:19px;background:#fff;"></div>
<div class="a" style="left:770px;top:392.95px;width:183px;height:0.8px;background:#ececec;"></div>
<span class="t" style="left:774.50px;top:378px;font-size:11px;line-height:12px;height:12px;color:#1a1a1a;transform:scaleX(0.9956);">X Location</span>
<span class="t" style="left:856.25px;top:378px;font-size:11px;line-height:12px;height:12px;color:#1a1a1a;transform:scaleX(0.9558);">200.694</span>
<div class="a" style="left:770px;top:393.5px;width:82.5px;height:19px;background:#fff;"></div>
<div class="a" style="left:853.5px;top:393.5px;width:99px;height:19px;background:#fff;"></div>
<div class="a" style="left:770px;top:412.2px;width:183px;height:0.8px;background:#ececec;"></div>
<span class="t" style="left:774.50px;top:397px;font-size:11px;line-height:12px;height:12px;color:#1a1a1a;transform:scaleX(0.9898);">Y Location</span>
<span class="t" style="left:856.25px;top:397px;font-size:11px;line-height:12px;height:12px;color:#1a1a1a;transform:scaleX(0.9919);">-52.706</span>
<div class="a" style="left:770px;top:413.0px;width:82.5px;height:19px;background:#fff;"></div>
<div class="a" style="left:853.5px;top:413.0px;width:99px;height:19px;background:#fff;"></div>
<div class="a" style="left:770px;top:431.7px;width:183px;height:0.8px;background:#ececec;"></div>
<span class="t" style="left:774.50px;top:416px;font-size:11px;line-height:12px;height:12px;color:#1a1a1a;transform:scaleX(1.0076);">Z Location</span>
<span class="t" style="left:856.25px;top:416px;font-size:11px;line-height:12px;height:12px;color:#1a1a1a;transform:scaleX(0.9661);">65.368</span>
<div class="a" style="left:770px;top:432.5px;width:82.5px;height:19px;background:#fff;"></div>
<div class="a" style="left:853.5px;top:432.5px;width:99px;height:19px;background:#e9e9e9;"></div>
<div class="a" style="left:770px;top:451.2px;width:183px;height:0.8px;background:#ececec;"></div>
<span class="t" style="left:774.50px;top:436px;font-size:11px;line-height:12px;height:12px;color:#1a1a1a;transform:scaleX(0.9661);">Distance to Ta...</span>
<span class="t" style="left:856.25px;top:436px;font-size:11px;line-height:12px;height:12px;color:#1a1a1a;transform:scaleX(0.9558);">187.347</span>
<div class="a" style="left:770px;top:452.25px;width:82.5px;height:19px;background:#fff;"></div>
<div class="a" style="left:853.5px;top:452.25px;width:99px;height:19px;background:#fff;"></div>
<div class="a" style="left:770px;top:470.95px;width:183px;height:0.8px;background:#ececec;"></div>
<span class="t" style="left:774.50px;top:456px;font-size:11px;line-height:12px;height:12px;color:#1a1a1a;transform:scaleX(1.0040);">Location</span>
<div class="a" style="left:854px;top:452.45px;width:98.5px;height:17.6px;background:#e1e1e1;border:1px solid #adadad"></div>
<span class="t" style="left:887.50px;top:456px;font-size:11px;line-height:12px;height:12px;color:#111;transform:scaleX(0.8996);">Place...</span>
<div class="a" style="left:770px;top:495.5px;width:82.5px;height:19px;background:#fff;"></div>
<div class="a" style="left:853.5px;top:495.5px;width:99px;height:19px;background:#fff;"></div>
<div class="a" style="left:770px;top:514.2px;width:183px;height:0.8px;background:#ececec;"></div>
<span class="t" style="left:774.50px;top:499px;font-size:11px;line-height:12px;height:12px;color:#1a1a1a;transform:scaleX(0.9751);">X Target</span>
<span class="t" style="left:856.25px;top:499px;font-size:11px;line-height:12px;height:12px;color:#1a1a1a;transform:scaleX(0.9438);">49.551</span>
<div class="a" style="left:770px;top:515.0px;width:82.5px;height:19px;background:#fff;"></div>
<div class="a" style="left:853.5px;top:515.0px;width:99px;height:19px;background:#fff;"></div>
<div class="a" style="left:770px;top:533.7px;width:183px;height:0.8px;background:#ececec;"></div>
<span class="t" style="left:774.50px;top:518px;font-size:11px;line-height:12px;height:12px;color:#1a1a1a;transform:scaleX(0.9676);">Y Target</span>
<span class="t" style="left:856.25px;top:518px;font-size:11px;line-height:12px;height:12px;color:#1a1a1a;transform:scaleX(0.9661);">36.682</span>
<div class="a" style="left:770px;top:534.75px;width:82.5px;height:19px;background:#fff;"></div>
<div class="a" style="left:853.5px;top:534.75px;width:99px;height:19px;background:#fff;"></div>
<div class="a" style="left:770px;top:553.45px;width:183px;height:0.8px;background:#ececec;"></div>
<span class="t" style="left:774.50px;top:538px;font-size:11px;line-height:12px;height:12px;color:#1a1a1a;transform:scaleX(0.9902);">Z Target</span>
<span class="t" style="left:856.25px;top:538px;font-size:11px;line-height:12px;height:12px;color:#1a1a1a;transform:scaleX(0.9537);">0.064</span>
<div class="a" style="left:770px;top:554.25px;width:82.5px;height:19px;background:#fff;"></div>
<div class="a" style="left:853.5px;top:554.25px;width:99px;height:19px;background:#fff;"></div>
<div class="a" style="left:770px;top:572.95px;width:183px;height:0.8px;background:#ececec;"></div>
<span class="t" style="left:774.50px;top:558px;font-size:11px;line-height:12px;height:12px;color:#1a1a1a;transform:scaleX(1.0040);">Location</span>
<div class="a" style="left:854px;top:554.45px;width:98.5px;height:17.6px;background:#e1e1e1;border:1px solid #adadad"></div>
<span class="t" style="left:887.50px;top:558px;font-size:11px;line-height:12px;height:12px;color:#111;transform:scaleX(0.8996);">Place...</span>
<div class="a" style="left:770px;top:597.5px;width:82.5px;height:19px;background:#fff;"></div>
<div class="a" style="left:853.5px;top:597.5px;width:99px;height:19px;background:#fff;"></div>
<div class="a" style="left:770px;top:616.2px;width:183px;height:0.8px;background:#ececec;"></div>
<span class="t" style="left:774.50px;top:601px;font-size:11px;line-height:12px;height:12px;color:#1a1a1a;transform:scaleX(0.9782);">Filename</span>
<span class="t" style="left:856.25px;top:601px;font-size:11px;line-height:12px;height:12px;color:#1a1a1a;transform:scaleX(0.9829);">(none)</span>
<div class="a" style="left:770px;top:617.25px;width:82.5px;height:19px;background:#fff;"></div>
<div class="a" style="left:853.5px;top:617.25px;width:99px;height:19px;background:#fff;"></div>
<div class="a" style="left:770px;top:635.95px;width:183px;height:0.8px;background:#ececec;"></div>
<span class="t" style="left:774.50px;top:621px;font-size:11px;line-height:12px;height:12px;color:#1a1a1a;transform:scaleX(0.9449);">Show</span>
<div class="a" style="left:856px;top:620.75px;width:12px;height:12px;border:1px solid #4a4a4a;background:#fff"></div><svg class="a" style="left:856px;top:620.75px" width="12" height="12" viewBox="0 0 11 11"><path d="M2.3 5.6L4.6 7.9L8.9 3" stroke="#3a3a3a" stroke-width="1.05" fill="none"/></svg>
<div class="a" style="left:770px;top:636.75px;width:82.5px;height:19px;background:#fff;"></div>
<div class="a" style="left:853.5px;top:636.75px;width:99px;height:19px;background:#fff;"></div>
<div class="a" style="left:770px;top:655.45px;width:183px;height:0.8px;background:#ececec;"></div>
<span class="t" style="left:774.50px;top:640px;font-size:11px;line-height:12px;height:12px;color:#1a1a1a;transform:scaleX(0.9230);">Gray</span>
<div class="a" style="left:856px;top:640.25px;width:12px;height:12px;border:1px solid #4a4a4a;background:#fff"></div><svg class="a" style="left:856px;top:640.25px" width="12" height="12" viewBox="0 0 11 11"><path d="M2.3 5.6L4.6 7.9L8.9 3" stroke="#3a3a3a" stroke-width="1.05" fill="none"/></svg>
<div class="a" style="left:934px;top:291.5px;width:18.5px;height:18.5px;background:#e4e4e4;border:1px solid #bdbdbd"></div>
<svg class="a" style="left:938px;top:297px" width="10" height="7"><path d="M1.500 1.500L5 5L8.500 1.500" stroke="#444" stroke-width="1" fill="none"/></svg>
<div class="a" style="left:934px;top:598px;width:18.5px;height:18px;background:#e4e4e4;border:1px solid #bdbdbd"></div>
<span class="t" style="left:939.50px;top:600px;font-size:11px;line-height:12px;height:12px;color:#111;transform:scaleX(0.8181);">...</span>
<div class="a" style="left:954px;top:0px;width:958px;height:1043px;background:#f0f0f0;"></div>
<div class="a" style="left:954px;top:0px;width:958px;height:1px;background:#6a6a6a;"></div>
<div class="a" style="left:954px;top:0px;width:1.3px;height:1043px;background:#6e6e6e;"></div>
<div class="a" style="left:955px;top:1px;width:957px;height:27.5px;background:#fff;"></div>
<div class="a" style="left:955px;top:28.5px;width:957px;height:25.5px;background:linear-gradient(#fbfbfb,#f5f5f5);"></div>
<span class="t" style="left:961.40px;top:8px;font-size:12px;line-height:14px;height:14px;color:#1a1a1a;transform:scaleX(0.9165);">Grasshopper - unnamed</span>
<svg class="a" style="left:1795px;top:5px" width="110" height="20" viewBox="1795 5 110 20"><path d="M1798 13.500H1808M1841.500 8.500H1851.500V18.500H1841.500ZM1886 8.500L1896 18.500M1896 8.500L1886 18.500" stroke="#222" stroke-width="1.100" fill="none"/></svg>
<span class="t" style="left:966.00px;top:35px;font-size:12px;line-height:14px;height:14px;color:#1a1a1a;transform:scaleX(0.8689);">File</span>
<span class="t" style="left:999.30px;top:35px;font-size:12px;line-height:14px;height:14px;color:#1a1a1a;transform:scaleX(0.9140);">Edit</span>
<span class="t" style="left:1034.40px;top:35px;font-size:12px;line-height:14px;height:14px;color:#1a1a1a;transform:scaleX(0.9150);">View</span>
<span class="t" style="left:1074.50px;top:35px;font-size:12px;line-height:14px;height:14px;color:#1a1a1a;transform:scaleX(0.9277);">Display</span>
<span class="t" style="left:1126.50px;top:35px;font-size:12px;line-height:14px;height:14px;color:#1a1a1a;transform:scaleX(0.9501);">Solution</span>
<span class="t" style="left:1183.60px;top:35px;font-size:12px;line-height:14px;height:14px;color:#1a1a1a;transform:scaleX(0.9644);">Help</span>
<span class="t" style="left:1858.50px;top:35px;font-size:12px;line-height:14px;height:14px;color:#1a1a1a;transform:scaleX(0.9094);">unnamed</span>
<div class="a" style="left:955px;top:54px;width:957px;height:21.5px;background:#f1f1f1;"></div>
<div class="a" style="left:955.5px;top:54.5px;width:33px;height:22px;background:#fdfdfd;border:1px solid #c4c4c4;border-bottom:none;border-radius:4px 4px 0 0"></div>
<span class="t" style="left:962.00px;top:58px;font-size:11px;line-height:12px;height:12px;color:#222;transform:scaleX(0.8828);">Prm</span>
<span class="t" style="left:996.20px;top:59px;font-size:11px;line-height:12px;height:12px;color:#808080;transform:scaleX(0.8793);">Math</span>
<span class="t" style="left:1032.80px;top:59px;font-size:11px;line-height:12px;height:12px;color:#808080;transform:scaleX(0.8722);">Set</span>
<span class="t" style="left:1062.90px;top:59px;font-size:11px;line-height:12px;height:12px;color:#808080;transform:scaleX(0.9102);">Vec</span>
<span class="t" style="left:1095.70px;top:59px;font-size:11px;line-height:12px;height:12px;color:#808080;transform:scaleX(0.8301);">Crv</span>
<span class="t" style="left:1126.00px;top:59px;font-size:11px;line-height:12px;height:12px;color:#808080;transform:scaleX(0.8680);">Srf</span>
<span class="t" style="left:1153.60px;top:59px;font-size:11px;line-height:12px;height:12px;color:#808080;transform:scaleX(0.8855);">Msh</span>
<span class="t" style="left:1187.40px;top:59px;font-size:11px;line-height:12px;height:12px;color:#808080;transform:scaleX(0.8504);">Int</span>
<span class="t" style="left:1214.50px;top:59px;font-size:11px;line-height:12px;height:12px;color:#808080;transform:scaleX(0.8661);">Trns</span>
<span class="t" style="left:1248.80px;top:59px;font-size:11px;line-height:12px;height:12px;color:#808080;transform:scaleX(0.8623);">Dis</span>
<span class="t" style="left:1279.60px;top:59px;font-size:11px;line-height:12px;height:12px;color:#808080;transform:scaleX(0.8644);">DeCodingSpaces</span>
<span class="t" style="left:1371.00px;top:59px;font-size:11px;line-height:12px;height:12px;color:#808080;transform:scaleX(0.9078);">Pufferfish</span>
<span class="t" style="left:1428.00px;top:59px;font-size:11px;line-height:12px;height:12px;color:#808080;transform:scaleX(0.8909);">Wb</span>
<span class="t" style="left:1457.80px;top:59px;font-size:11px;line-height:12px;height:12px;color:#808080;transform:scaleX(0.8696);">LB</span>
<span class="t" style="left:1485.60px;top:59px;font-size:11px;line-height:12px;height:12px;color:#808080;transform:scaleX(0.8866);">HB-E</span>
<span class="t" style="left:1524.00px;top:59px;font-size:11px;line-height:12px;height:12px;color:#808080;transform:scaleX(0.9120);">@it</span>
<span class="t" style="left:1555.40px;top:59px;font-size:11px;line-height:12px;height:12px;color:#808080;transform:scaleX(0.8714);">Kangaroo2</span>
<span class="t" style="left:1618.50px;top:59px;font-size:11px;line-height:12px;height:12px;color:#808080;transform:scaleX(0.8868);">Physarealm</span>
<span class="t" style="left:1686.20px;top:59px;font-size:11px;line-height:12px;height:12px;color:#808080;transform:scaleX(0.8311);">HB</span>
<span class="t" style="left:1715.50px;top:59px;font-size:11px;line-height:12px;height:12px;color:#808080;transform:scaleX(0.7979);">DF</span>
<span class="t" style="left:1744.30px;top:59px;font-size:11px;line-height:12px;height:12px;color:#808080;transform:scaleX(0.8686);">Culebra_GH</span>
<span class="t" style="left:1815.60px;top:59px;font-size:11px;line-height:12px;height:12px;color:#808080;transform:scaleX(0.8937);">H</span>
<span class="t" style="left:1841.90px;top:59px;font-size:11px;line-height:12px;height:12px;color:#808080;transform:scaleX(0.8937);">R</span>
<span class="t" style="left:1868.10px;top:59px;font-size:11px;line-height:12px;height:12px;color:#808080;transform:scaleX(0.8937);">D</span>
<span class="t" style="left:1893.90px;top:59px;font-size:11px;line-height:12px;height:12px;color:#808080;transform:scaleX(0.8840);">M</span>
<div class="a" style="left:955px;top:75.5px;width:957px;height:106px;background:linear-gradient(#f4f4f4,#e6e6e6 60%,#dedede);border-top:1px solid #c9c9c9"></div>
<div class="a" style="left:955px;top:181.5px;width:957px;height:1.5px;background:#7d7d7d;"></div>
<svg class="a" style="left:955px;top:76px" width="957" height="105" viewBox="955 76 957 105"><defs><linearGradient id="hx" x1="0" y1="0" x2="0" y2="1"><stop offset="0" stop-color="#5a5a5a"/><stop offset=".3" stop-color="#2c2c2c"/><stop offset="1" stop-color="#101010"/></linearGradient><linearGradient id="pn" x1="0" y1="0" x2="0" y2="1"><stop offset="0" stop-color="#f6f6f6"/><stop offset="1" stop-color="#dadada"/></linearGradient><linearGradient id="gsq" x1="0" y1="0" x2="0" y2="1"><stop offset="0" stop-color="#d8d8d8"/><stop offset="1" stop-color="#787878"/></linearGradient></defs><rect x="958.3" y="77.3" width="152.3" height="93.9" rx="4" fill="url(#pn)" stroke="#cfcfcf" stroke-width=".8"/><path d="M958.3 158.6H1110.6V167.2Q1110.6 171.2 1106.6 171.2H962.3Q958.3 171.2 958.3 167.2Z" fill="#1c1c1c"/><path d="M1101.1 164.9h5M1103.6 162.4v5" stroke="#999" stroke-width="1"/><rect x="1114.2" y="77.3" width="55.0" height="93.9" rx="4" fill="url(#pn)" stroke="#cfcfcf" stroke-width=".8"/><path d="M1114.2 158.6H1169.2V167.2Q1169.2 171.2 1165.2 171.2H1118.2Q1114.2 171.2 1114.2 167.2Z" fill="#1c1c1c"/><path d="M1159.7 164.9h5M1162.2 162.4v5" stroke="#999" stroke-width="1"/><rect x="1173.5" y="77.3" width="125.8" height="93.9" rx="4" fill="url(#pn)" stroke="#cfcfcf" stroke-width=".8"/><path d="M1173.5 158.6H1299.3V167.2Q1299.3 171.2 1295.3 171.2H1177.5Q1173.5 171.2 1173.5 167.2Z" fill="#1c1c1c"/><path d="M1289.8 164.9h5M1292.3 162.4v5" stroke="#999" stroke-width="1"/><rect x="1302.9" y="77.3" width="100.0" height="68.2" rx="4" fill="url(#pn)" stroke="#cfcfcf" stroke-width=".8"/><path d="M1302.9 132H1402.9V141.5Q1402.9 145.5 1398.9 145.5H1306.9Q1302.9 145.5 1302.9 141.5Z" fill="#1c1c1c"/><path d="M1393.4 138.8h5M1395.9 136.2v5" stroke="#999" stroke-width="1"/><path d="M990.4 80V155" stroke="#d0d0d0" stroke-width="1"/><path d="M1051 80V155" stroke="#d0d0d0" stroke-width="1"/><path d="M1204.6 80V155" stroke="#d0d0d0" stroke-width="1"/><path d="M1266.5 80V155" stroke="#d0d0d0" stroke-width="1"/><path d="M1334 80V129" stroke="#d0d0d0" stroke-width="1"/><path d="M1369.3 80V129" stroke="#d0d0d0" stroke-width="1"/><path d="M983.3 90.9L977.8 100.3L966.7 100.3L961.1 90.9L966.7 81.5L977.8 81.5Z" fill="none" stroke="#fff" stroke-opacity=".75" stroke-width="3.200" stroke-linejoin="round"/><path d="M983.3 90.9L977.8 100.3L966.7 100.3L961.1 90.9L966.7 81.5L977.8 81.5Z" fill="url(#hx)" stroke="#0c0c0c" stroke-width="1.200" stroke-linejoin="round"/><path d="M961.1 90.9L966.7 81.5L977.8 81.5L983.3 90.9Q972.2 88.1 961.1 90.9Z" fill="#fff" fill-opacity=".13"/><path d="M968.7 87.4l7 7m0 -7l-7 7" stroke="#f4f4f4" stroke-width="2.600"/><path d="M1018.4 90.9L1012.8 100.3L1001.8 100.3L996.2 90.9L1001.8 81.5L1012.8 81.5Z" fill="none" stroke="#fff" stroke-opacity=".75" stroke-width="3.200" stroke-linejoin="round"/><path d="M1018.4 90.9L1012.8 100.3L1001.8 100.3L996.2 90.9L1001.8 81.5L1012.8 81.5Z" fill="url(#hx)" stroke="#0c0c0c" stroke-width="1.200" stroke-linejoin="round"/><path d="M996.2 90.9L1001.8 81.5L1012.8 81.5L1018.4 90.9Q1007.3 88.1 996.2 90.9Z" fill="#fff" fill-opacity=".13"/><ellipse cx="1007.3" cy="90.9" rx="5.500" ry="4.200" fill="none" stroke="#f4f4f4" stroke-width="2.200"/><path d="M1045.0 90.9L1039.5 100.3L1028.4 100.3L1022.8 90.9L1028.4 81.5L1039.5 81.5Z" fill="none" stroke="#fff" stroke-opacity=".75" stroke-width="3.200" stroke-linejoin="round"/><path d="M1045.0 90.9L1039.5 100.3L1028.4 100.3L1022.8 90.9L1028.4 81.5L1039.5 81.5Z" fill="url(#hx)" stroke="#0c0c0c" stroke-width="1.200" stroke-linejoin="round"/><path d="M1022.8 90.9L1028.4 81.5L1039.5 81.5L1045.0 90.9Q1033.9 88.1 1022.8 90.9Z" fill="#fff" fill-opacity=".13"/><path d="M1029.9 94.9L1037.9 86.9" stroke="#f4f4f4" stroke-width="2"/><circle cx="1029.9" cy="94.9" r="1.800" fill="#222" stroke="#f4f4f4" stroke-width="1"/><circle cx="1037.9" cy="86.9" r="1.800" fill="#222" stroke="#f4f4f4" stroke-width="1"/><path d="M1079.8 90.9L1074.2 100.3L1063.2 100.3L1057.6 90.9L1063.2 81.5L1074.2 81.5Z" fill="none" stroke="#fff" stroke-opacity=".75" stroke-width="3.200" stroke-linejoin="round"/><path d="M1079.8 90.9L1074.2 100.3L1063.2 100.3L1057.6 90.9L1063.2 81.5L1074.2 81.5Z" fill="url(#hx)" stroke="#0c0c0c" stroke-width="1.200" stroke-linejoin="round"/><path d="M1057.6 90.9L1063.2 81.5L1074.2 81.5L1079.8 90.9Q1068.7 88.1 1057.6 90.9Z" fill="#fff" fill-opacity=".13"/><path d="M1063.7 88.4L1068.7 85.9L1073.7 88.4V93.9L1068.7 96.4L1063.7 93.9Z" fill="#aaa" stroke="#eee" stroke-width=".7"/><path d="M1063.7 88.4L1068.7 90.9L1073.7 88.4M1068.7 90.9V96.4" stroke="#eee" stroke-width=".7" fill="none"/><path d="M1106.3 90.9L1100.8 100.3L1089.7 100.3L1084.1 90.9L1089.7 81.5L1100.8 81.5Z" fill="none" stroke="#fff" stroke-opacity=".75" stroke-width="3.200" stroke-linejoin="round"/><path d="M1106.3 90.9L1100.8 100.3L1089.7 100.3L1084.1 90.9L1089.7 81.5L1100.8 81.5Z" fill="url(#hx)" stroke="#0c0c0c" stroke-width="1.200" stroke-linejoin="round"/><path d="M1084.1 90.9L1089.7 81.5L1100.8 81.5L1106.3 90.9Q1095.2 88.1 1084.1 90.9Z" fill="#fff" fill-opacity=".13"/><path d="M1091.2 85.9L1099.2 86.9L1100.7 94.9L1089.7 95.9Z" fill="#bbb" stroke="#eee" stroke-width=".8"/><path d="M983.3 117.4L977.8 126.8L966.7 126.8L961.1 117.4L966.7 108.0L977.8 108.0Z" fill="none" stroke="#fff" stroke-opacity=".75" stroke-width="3.200" stroke-linejoin="round"/><path d="M983.3 117.4L977.8 126.8L966.7 126.8L961.1 117.4L966.7 108.0L977.8 108.0Z" fill="url(#hx)" stroke="#0c0c0c" stroke-width="1.200" stroke-linejoin="round"/><path d="M961.1 117.4L966.7 108.0L977.8 108.0L983.3 117.4Q972.2 114.6 961.1 117.4Z" fill="#fff" fill-opacity=".13"/><path d="M967.2 122.4L974.2 115.4" stroke="#f4f4f4" stroke-width="2.600"/><path d="M970.7 111.9H977.7V118.9Z" fill="#f4f4f4"/><path d="M1018.4 117.4L1012.8 126.8L1001.8 126.8L996.2 117.4L1001.8 108.0L1012.8 108.0Z" fill="none" stroke="#fff" stroke-opacity=".75" stroke-width="3.200" stroke-linejoin="round"/><path d="M1018.4 117.4L1012.8 126.8L1001.8 126.8L996.2 117.4L1001.8 108.0L1012.8 108.0Z" fill="url(#hx)" stroke="#0c0c0c" stroke-width="1.200" stroke-linejoin="round"/><path d="M996.2 117.4L1001.8 108.0L1012.8 108.0L1018.4 117.4Q1007.3 114.6 996.2 117.4Z" fill="#fff" fill-opacity=".13"/><path d="M1002.3 113.4Q1010.3 114.4 1011.3 122.4" stroke="#f4f4f4" stroke-width="2.300" fill="none"/><path d="M1008.3 119.4L1011.8 123.9L1013.8 118.4Z" fill="#f4f4f4"/><path d="M1045.0 117.4L1039.5 126.8L1028.4 126.8L1022.8 117.4L1028.4 108.0L1039.5 108.0Z" fill="none" stroke="#fff" stroke-opacity=".75" stroke-width="3.200" stroke-linejoin="round"/><path d="M1045.0 117.4L1039.5 126.8L1028.4 126.8L1022.8 117.4L1028.4 108.0L1039.5 108.0Z" fill="url(#hx)" stroke="#0c0c0c" stroke-width="1.200" stroke-linejoin="round"/><path d="M1022.8 117.4L1028.4 108.0L1039.5 108.0L1045.0 117.4Q1033.9 114.6 1022.8 117.4Z" fill="#fff" fill-opacity=".13"/><path d="M1027.9 116.4L1036.9 112.9L1039.9 118.9L1030.9 122.4Z" fill="none" stroke="#f4f4f4" stroke-width="1.800"/><path d="M1031.4 116.9L1035.9 115.4L1036.9 117.9L1032.4 119.4Z" fill="#bbb"/><path d="M1079.8 117.4L1074.2 126.8L1063.2 126.8L1057.6 117.4L1063.2 108.0L1074.2 108.0Z" fill="none" stroke="#fff" stroke-opacity=".75" stroke-width="3.200" stroke-linejoin="round"/><path d="M1079.8 117.4L1074.2 126.8L1063.2 126.8L1057.6 117.4L1063.2 108.0L1074.2 108.0Z" fill="url(#hx)" stroke="#0c0c0c" stroke-width="1.200" stroke-linejoin="round"/><path d="M1057.6 117.4L1063.2 108.0L1074.2 108.0L1079.8 117.4Q1068.7 114.6 1057.6 117.4Z" fill="#fff" fill-opacity=".13"/><path d="M1065.7 112.4H1071.7L1074.7 117.4L1071.7 122.4H1065.7L1062.7 117.4Z" fill="#c8c8c8" stroke="#fff" stroke-width=".8"/><path d="M1018.4 144.0L1012.8 153.4L1001.8 153.4L996.2 144.0L1001.8 134.6L1012.8 134.6Z" fill="none" stroke="#fff" stroke-opacity=".75" stroke-width="3.200" stroke-linejoin="round"/><path d="M1018.4 144.0L1012.8 153.4L1001.8 153.4L996.2 144.0L1001.8 134.6L1012.8 134.6Z" fill="url(#hx)" stroke="#0c0c0c" stroke-width="1.200" stroke-linejoin="round"/><path d="M996.2 144.0L1001.8 134.6L1012.8 134.6L1018.4 144.0Q1007.3 141.2 996.2 144.0Z" fill="#fff" fill-opacity=".13"/><ellipse cx="1007.3" cy="144" rx="6" ry="4.500" fill="none" stroke="#f4f4f4" stroke-width="1.500" transform="rotate(-30 1007.3 144)"/><ellipse cx="1007.3" cy="144" rx="3" ry="2" fill="none" stroke="#f4f4f4" stroke-width="1.300" transform="rotate(-30 1007.3 144)"/><path d="M1045.0 144.0L1039.5 153.4L1028.4 153.4L1022.8 144.0L1028.4 134.6L1039.5 134.6Z" fill="none" stroke="#fff" stroke-opacity=".75" stroke-width="3.200" stroke-linejoin="round"/><path d="M1045.0 144.0L1039.5 153.4L1028.4 153.4L1022.8 144.0L1028.4 134.6L1039.5 134.6Z" fill="url(#hx)" stroke="#0c0c0c" stroke-width="1.200" stroke-linejoin="round"/><path d="M1022.8 144.0L1028.4 134.6L1039.5 134.6L1045.0 144.0Q1033.9 141.2 1022.8 144.0Z" fill="#fff" fill-opacity=".13"/><path d="M1033.9 138L1039.9 144L1033.9 150L1027.9 144Z" fill="none" stroke="#f4f4f4" stroke-width="2"/><path d="M1033.9 141.5L1036.4 144L1033.9 146.5L1031.4 144Z" fill="#bbb"/><path d="M1079.8 144.0L1074.2 153.4L1063.2 153.4L1057.6 144.0L1063.2 134.6L1074.2 134.6Z" fill="none" stroke="#fff" stroke-opacity=".75" stroke-width="3.200" stroke-linejoin="round"/><path d="M1079.8 144.0L1074.2 153.4L1063.2 153.4L1057.6 144.0L1063.2 134.6L1074.2 134.6Z" fill="url(#hx)" stroke="#0c0c0c" stroke-width="1.200" stroke-linejoin="round"/><path d="M1057.6 144.0L1063.2 134.6L1074.2 134.6L1079.8 144.0Q1068.7 141.2 1057.6 144.0Z" fill="#fff" fill-opacity=".13"/><path d="M1068.7 138V150M1063.5 141L1073.9 147M1063.5 147L1073.9 141" stroke="#ddd" stroke-width="1.100"/><circle cx="1068.7" cy="144" r="3.500" fill="none" stroke="#ddd" stroke-width=".9"/><path d="M1139.4 90.9L1133.8 100.3L1122.8 100.3L1117.2 90.9L1122.8 81.5L1133.8 81.5Z" fill="none" stroke="#fff" stroke-opacity=".75" stroke-width="3.200" stroke-linejoin="round"/><path d="M1139.4 90.9L1133.8 100.3L1122.8 100.3L1117.2 90.9L1122.8 81.5L1133.8 81.5Z" fill="url(#hx)" stroke="#0c0c0c" stroke-width="1.200" stroke-linejoin="round"/><path d="M1117.2 90.9L1122.8 81.5L1133.8 81.5L1139.4 90.9Q1128.3 88.1 1117.2 90.9Z" fill="#fff" fill-opacity=".13"/><circle cx="1128.3" cy="90.9" r="5.500" fill="#f4f4f4"/><circle cx="1129.3" cy="90.4" r="2.300" fill="#222"/><path d="M1166.0 90.9L1160.5 100.3L1149.4 100.3L1143.8 90.9L1149.4 81.5L1160.5 81.5Z" fill="none" stroke="#fff" stroke-opacity=".75" stroke-width="3.200" stroke-linejoin="round"/><path d="M1166.0 90.9L1160.5 100.3L1149.4 100.3L1143.8 90.9L1149.4 81.5L1160.5 81.5Z" fill="url(#hx)" stroke="#0c0c0c" stroke-width="1.200" stroke-linejoin="round"/><path d="M1143.8 90.9L1149.4 81.5L1160.5 81.5L1166.0 90.9Q1154.9 88.1 1143.8 90.9Z" fill="#fff" fill-opacity=".13"/><text x="1154.9" y="96.4" font-family="Liberation Serif" font-weight="bold" font-size="16" text-anchor="middle" fill="#f4f4f4">A</text><path d="M1139.4 117.4L1133.8 126.8L1122.8 126.8L1117.2 117.4L1122.8 108.0L1133.8 108.0Z" fill="none" stroke="#fff" stroke-opacity=".75" stroke-width="3.200" stroke-linejoin="round"/><path d="M1139.4 117.4L1133.8 126.8L1122.8 126.8L1117.2 117.4L1122.8 108.0L1133.8 108.0Z" fill="url(#hx)" stroke="#0c0c0c" stroke-width="1.200" stroke-linejoin="round"/><path d="M1117.2 117.4L1122.8 108.0L1133.8 108.0L1139.4 117.4Q1128.3 114.6 1117.2 117.4Z" fill="#fff" fill-opacity=".13"/><text x="1128.3" y="122.9" font-family="Liberation Serif" font-weight="bold" font-size="16" text-anchor="middle" fill="#f4f4f4">7</text><path d="M1139.4 144.0L1133.8 153.4L1122.8 153.4L1117.2 144.0L1122.8 134.6L1133.8 134.6Z" fill="none" stroke="#fff" stroke-opacity=".75" stroke-width="3.200" stroke-linejoin="round"/><path d="M1139.4 144.0L1133.8 153.4L1122.8 153.4L1117.2 144.0L1122.8 134.6L1133.8 134.6Z" fill="url(#hx)" stroke="#0c0c0c" stroke-width="1.200" stroke-linejoin="round"/><path d="M1117.2 144.0L1122.8 134.6L1133.8 134.6L1139.4 144.0Q1128.3 141.2 1117.2 144.0Z" fill="#fff" fill-opacity=".13"/><text x="1128.3" y="148.5" font-family="Liberation Serif" font-weight="bold" font-size="12.500" text-anchor="middle" fill="#f4f4f4" textLength="16" lengthAdjust="spacingAndGlyphs">0.1</text><rect x="1176.4" y="79.9" width="22" height="22" rx="2.500" fill="url(#gsq)" stroke="#222" stroke-width="1.200"/><path d="M1187.4 84.9V90.9" stroke="#111" stroke-width="2.600"/><path d="M1182.9 89.9H1191.9L1187.4 94.9Z" fill="#111"/><path d="M1180.4 96.9H1194.4" stroke="#111" stroke-width="2"/><path d="M1181.4 99.4H1193.4" stroke="#111" stroke-width="1" stroke-dasharray="1 1"/><rect x="1211.3" y="79.9" width="22" height="22" rx="2.500" fill="url(#gsq)" stroke="#222" stroke-width="1.200"/><rect x="1217.8" y="83.4" width="9" height="15" rx="1" fill="#222"/><rect x="1219.0" y="84.60000000000001" width="6.600" height="6.500" fill="#e8e8e8"/><rect x="1237.8" y="79.9" width="22" height="22" rx="2.500" fill="url(#gsq)" stroke="#222" stroke-width="1.200"/><rect x="1241.3" y="83.9" width="15" height="3.800" fill="#eee" stroke="#222" stroke-width=".9"/><rect x="1241.3" y="88.9" width="15" height="3.800" fill="#eee" stroke="#222" stroke-width=".9"/><rect x="1241.3" y="93.9" width="15" height="3.800" fill="#eee" stroke="#222" stroke-width=".9"/><rect x="1273.2" y="79.9" width="22" height="22" rx="2.500" fill="#e8209a" stroke="#5a0a3a" stroke-width="1.200"/><rect x="1274.2" y="81.4" width="20" height="5" fill="#f070c0" opacity=".7"/><path d="M1274.2 92.4H1294.2" stroke="#fff" stroke-width="1.200"/><circle cx="1288.2" cy="92.4" r="1.800" fill="#fff"/><path d="M1273.2 89.9l3 2.500l-3 2.500Z" fill="#111"/><rect x="1176.4" y="106.4" width="22" height="22" rx="2.500" fill="#f4c020" stroke="#6a4a00" stroke-width="1.200"/><path d="M1181.4 122.4L1184.4 116.4L1186.4 120.4L1189.4 112.4L1191.4 118.4L1193.9 111.4" stroke="#a86000" stroke-width="1.600" fill="none"/><circle cx="1222.3" cy="117.4" r="11.500" fill="#8a8a8a" stroke="#3a3a3a" stroke-width="1.200"/><circle cx="1222.3" cy="117.4" r="7.500" fill="#2c2c2c" stroke="#111" stroke-width="1"/><path d="M1227.3 115.4L1232.3 117.4L1227.3 119.4Z" fill="#2c2c2c"/><rect x="1273.2" y="106.4" width="22" height="22" rx="2.500" fill="#30b020" stroke="#0a4a0a" stroke-width="1.200"/><rect x="1274.2" y="107.4" width="5" height="5" fill="#0a6010"/><rect x="1279.2" y="107.4" width="5" height="5" fill="#209018"/><rect x="1284.2" y="107.4" width="5" height="5" fill="#c0ffa0"/><rect x="1289.2" y="107.4" width="5" height="5" fill="#60e040"/><rect x="1274.2" y="112.4" width="5" height="5" fill="#209018"/><rect x="1279.2" y="112.4" width="5" height="5" fill="#c0ffa0"/><rect x="1284.2" y="112.4" width="5" height="5" fill="#60e040"/><rect x="1289.2" y="112.4" width="5" height="5" fill="#0a6010"/><rect x="1274.2" y="117.4" width="5" height="5" fill="#c0ffa0"/><rect x="1279.2" y="117.4" width="5" height="5" fill="#60e040"/><rect x="1284.2" y="117.4" width="5" height="5" fill="#0a6010"/><rect x="1289.2" y="117.4" width="5" height="5" fill="#209018"/><rect x="1274.2" y="122.4" width="5" height="5" fill="#60e040"/><rect x="1279.2" y="122.4" width="5" height="5" fill="#0a6010"/><rect x="1284.2" y="122.4" width="5" height="5" fill="#209018"/><rect x="1289.2" y="122.4" width="5" height="5" fill="#c0ffa0"/><rect x="1273.2" y="106.4" width="22" height="22" rx="2.500" fill="none" stroke="#0a3a0a" stroke-width="1.200"/><rect x="1211.3" y="133" width="22" height="22" rx="2.500" fill="url(#gsq)" stroke="#222" stroke-width="1.200"/><circle cx="1223.3" cy="139" r="1.800" fill="#111"/><path d="M1218.3 143L1223.3 142L1225.3 146L1220.3 147L1218.3 152" stroke="#111" stroke-width="2" fill="none"/><path d="M1217.3 136.5h4" stroke="#ddd" stroke-width="1"/><circle cx="1312.8" cy="94.9" r="4.800" fill="#d81828"/><circle cx="1321.8" cy="95.4" r="4.500" fill="#d81828"/><circle cx="1311.8" cy="93.4" r="1.500" fill="#ffb0b0"/><circle cx="1320.8" cy="93.9" r="1.300" fill="#ffb0b0"/><path d="M1313.8 89.9Q1314.8 83.9 1318.8 81.9Q1319.8 87.9 1321.8 90.9" stroke="#5a3a10" stroke-width="1" fill="none"/><path d="M1317.8 81.9Q1312.8 80.9 1311.8 84.9Q1315.8 84.9 1317.8 81.9Z" fill="#50a020"/><path d="M1342.6 87.4H1351.6V82.9L1361.6 90.9L1351.6 98.9V94.4H1342.6Z" fill="#4a4a4a" stroke="#222" stroke-width="1"/><circle cx="1385" cy="89.9" r="7.500" fill="#b8b8b8" stroke="#888" stroke-width=".8"/><circle cx="1390" cy="93.9" r="6" fill="#e83080" stroke="#901040" stroke-width=".8"/><circle cx="1388.5" cy="92.4" r="2" fill="#ffc0d8"/><circle cx="1384" cy="88.9" r="2.500" fill="#444"/><rect x="1305.8" y="106.4" width="22" height="22" rx="2.500" fill="#2a2a2a" stroke="#000" stroke-width="1.200"/><path d="M1316.8 126.4V117.4M1316.8 119.4L1311.8 114.4M1316.8 118.4L1321.8 113.4M1316.8 116.4L1315.8 110.4" stroke="#0a0a0a" stroke-width="1.600"/><ellipse cx="1316.8" cy="114.4" rx="8.500" ry="5.500" fill="#9a9a9a" opacity=".75"/><path d="M1316.8 126.4V115.4M1316.8 119.4L1311.8 113.4M1316.8 117.4L1321.8 112.4" stroke="#111" stroke-width="1.300"/><path d="M1342.6 113.9H1351.6V109.4L1361.6 117.4L1351.6 125.4V120.9H1342.6Z" fill="#f4f4f4" stroke="#777" stroke-width="1.100"/><path d="M1385 108.4H1389V115.4L1394 124.4Q1394.5 126.4 1392 126.4H1382Q1379.5 126.4 1380 124.4L1385 115.4Z" fill="#f8d0e4" stroke="#a02060" stroke-width=".9"/><path d="M1382.5 119.9H1391.5L1394 124.4Q1394.5 126.4 1392 126.4H1382Q1379.5 126.4 1380 124.4Z" fill="#e82880"/></svg>
<span class="t" style="left:1009.40px;top:159px;font-size:10px;line-height:11px;height:11px;color:#fff;transform:scaleX(0.9021);">Geometry</span>
<span class="t" style="left:1119.70px;top:159px;font-size:10px;line-height:11px;height:11px;color:#fff;transform:scaleX(0.9104);">Primitive</span>
<span class="t" style="left:1221.00px;top:159px;font-size:10px;line-height:11px;height:11px;color:#fff;transform:scaleX(0.9308);">Input</span>
<span class="t" style="left:1342.00px;top:132px;font-size:10px;line-height:11px;height:11px;color:#fff;transform:scaleX(0.9277);">Util</span>
<div class="a" style="left:955px;top:183px;width:957px;height:27px;background:linear-gradient(#fdfdfd,#f4f4f4 50%,#ececec);"></div>
<div class="a" style="left:1016px;top:186.5px;width:135px;height:20px;background:#fff;border:1px solid #8a8a8a"></div>
<span class="t" style="left:1019.50px;top:190px;font-size:11px;line-height:12px;height:12px;color:#111;transform:scaleX(0.9242);">125%</span>
<svg class="a" style="left:955px;top:183px" width="957" height="27" viewBox="955 183 957 27"><path d="M960 206V190H964L965.500 187.500H972L973.500 190H976.500V206Z" fill="#e8e8e8" stroke="#8a8a8a" stroke-width=".8"/><path d="M960 206V194.500H970L972.500 192H977V206Z" fill="#58b040" stroke="#2a6a1a" stroke-width=".8"/><rect x="986.500" y="186.500" width="19" height="19" rx="1.500" fill="#2870e0" stroke="#103a90" stroke-width=".9"/><rect x="990" y="187" width="12" height="7" fill="#f4f4f4"/><rect x="990.500" y="197.500" width="11" height="8" fill="#183878"/><rect x="992" y="199" width="3" height="5" fill="#dfe8f8"/><path d="M1139.500 194.500L1143.200 198.200L1147 194.500" stroke="#444" stroke-width="1" fill="none"/><path d="M1156.500 193V187.500H1162M1170 187.500H1175.500V193M1175.500 200V205.500H1170M1162 205.500H1156.500V200" stroke="#111" stroke-width="2.600" fill="none"/><path d="M1163.500 194L1168.500 199M1168.500 194L1163.500 199" stroke="#111" stroke-width="1.300"/><path d="M1183.500 195.500h4l-2 2.300Z" fill="#111"/><path d="M1221.500 195.500h4l-2 2.300Z" fill="#111"/><path d="M1905 195.500h4l-2 2.300Z" fill="#111"/><path d="M1194 196.500Q1204 187 1214 196.500Q1204 206 1194 196.500Z" fill="#fff" stroke="#124a7a" stroke-width="1.600"/><circle cx="1204" cy="196.500" r="4.200" fill="#2a8ad0"/><circle cx="1204" cy="196.500" r="2" fill="#0a1a2a"/><path d="M1232 199Q1231 203.500 1235 204.500Q1240 205 1243 200" stroke="#5a1a0a" stroke-width="1.800" fill="none"/><path d="M1238 203L1247 189.500L1250.500 188L1249.500 192L1241.500 204.500Z" fill="#e03020" stroke="#7a1008" stroke-width=".6"/><path d="M1247 189.500L1250.500 188L1249.500 192Z" fill="#f0c090"/><path d="M1741 187L1750 187L1752.500 193L1745.500 197L1738.500 193Z" fill="#e0e0e0" stroke="#8a8a8a" stroke-width=".8"/><ellipse cx="1745.600" cy="201" rx="8" ry="4.800" fill="#2a2a2a"/><ellipse cx="1745.600" cy="200" rx="4" ry="2" fill="#555"/><g transform="rotate(-38 1772.200 196.400)"><rect x="1762.700" y="189.900" width="19" height="13" rx="5" fill="#f4f4f4" stroke="#7a7a7a" stroke-width="1.300"/><path d="M1769 190V203M1775.500 190V203" stroke="#8a8a8a" stroke-width="1.100"/></g><rect x="1786" y="184" width="25" height="25" fill="#e4f0fc" stroke="#5a9ad8" stroke-width="1"/><g transform="rotate(-38 1798.500 196.400)"><rect x="1789" y="189.400" width="19" height="14" rx="5.500" fill="#d01818" stroke="#7a0808" stroke-width="1"/><ellipse cx="1804" cy="196.400" rx="3" ry="5" fill="#a01010"/></g><path d="M1817.500 186V207M1876 186V207" stroke="#d8d8d8" stroke-width="1"/><g transform="rotate(-38 1835.800 196.400)"><rect x="1826.300" y="189.900" width="19" height="13" rx="5" fill="#d8d8d8" stroke="#8a8a8a" stroke-width="1"/><rect x="1834" y="189.900" width="11.300" height="13" rx="5" fill="#48b020" stroke="#1a6a0a" stroke-width="1"/></g><path d="M1827 187L1846 206" stroke="#556" stroke-width="1"/><circle cx="1861.300" cy="196.400" r="9" fill="#f0f0f0" stroke="#8a8a8a" stroke-width=".9"/><path d="M1861.300 187.400A9 9 0 0 0 1861.300 205.400Z" fill="#e88018"/><path d="M1861.300 187.400V205.400" stroke="#7a3a08" stroke-width="1"/><polygon points="1899.3,199.8 1894.4,204.7 1887.6,204.7 1882.7,199.8 1882.7,193.0 1887.6,188.1 1894.4,188.1 1899.3,193.0" fill="#6ab4f0" stroke="#2a5a9a" stroke-width="1.300"/><circle cx="1889" cy="194" r="3.500" fill="#b8dcfa" opacity=".8"/></svg>
<div class="a" style="left:955px;top:210px;width:957.5px;height:812px;background:#d4cfc9;"></div>
<div class="a" style="left:955px;top:210px;width:957.5px;height:45.5px;background:linear-gradient(#cac7be 0%,#cdc9c2 45%,#bcb8af 68%,#a29f98 86%,#8f8c86 100%);"></div>
<div class="a" style="left:955px;top:254.8px;width:957.5px;height:1.2px;background:#423f3c;"></div>
<div class="a" style="left:955px;top:256px;width:957.5px;height:2px;background:#d9d5ce;"></div>
<svg class="a" style="left:956px;top:210px" width="956" height="812" viewBox="956 210 956 812"><path d="M1060.7 210V1022M1201.3 210V1022M1341.9 210V1022M1482.5 210V1022M1623.1 210V1022M1763.7 210V1022M1904.3 210V1022M956 301.6H1912M956 348.5H1912M956 395.3H1912M956 442.2H1912M956 489.1H1912M956 535.9H1912M956 582.8H1912M956 629.7H1912M956 676.5H1912M956 723.4H1912M956 770.3H1912M956 817.2H1912M956 864.0H1912M956 910.9H1912M956 957.8H1912M956 1004.6H1912" stroke="#c5c0b9" stroke-width="1.15" fill="none"/><path d="M1060.7 210V254M1201.3 210V254M1341.9 210V254M1482.5 210V254M1623.1 210V254M1763.7 210V254M1904.3 210V254" stroke="#aaa69f" stroke-width="1" opacity=".35"/><defs><linearGradient id="w1" gradientUnits="userSpaceOnUse" x1="1087" y1="0" x2="1815" y2="0"><stop offset="0" stop-color="#a3a596"/><stop offset=".35" stop-color="#8cb868"/><stop offset="1" stop-color="#7cd03e"/></linearGradient><linearGradient id="w2" gradientUnits="userSpaceOnUse" x1="1192" y1="0" x2="1815" y2="0"><stop offset="0" stop-color="#a3a596"/><stop offset=".35" stop-color="#8cb868"/><stop offset="1" stop-color="#7cd03e"/></linearGradient><linearGradient id="w3" gradientUnits="userSpaceOnUse" x1="1484" y1="0" x2="1815" y2="0"><stop offset="0" stop-color="#a3a596"/><stop offset=".35" stop-color="#8cb868"/><stop offset="1" stop-color="#7cd03e"/></linearGradient></defs><path d="M1087 475.8C1147.0 475.8 1755.0 474.4 1815 474.4" stroke="url(#w1)" stroke-width="2.8" fill="none" stroke-linecap="round"/><path d="M1192 493.4C1252.0 493.4 1755.0 492.8 1815 492.8" stroke="url(#w2)" stroke-width="2.8" fill="none" stroke-linecap="round"/><path d="M1484 625.5C1649.0 625.5 1650.0 511.8 1815 511.8" stroke="url(#w3)" stroke-width="2.8" fill="none" stroke-linecap="round"/><path d="M1087 475.8C1109.0 475.8 1109.0 493.4 1131 493.4" stroke="#4c4c4c" stroke-width="2.2" fill="none" stroke-linecap="round"/><path d="M1192 493.4C1274.0 493.4 1153.0 611.5 1235 611.5" stroke="#4c4c4c" stroke-width="2.2" fill="none" stroke-linecap="round"/><path d="M1144 633.1C1151.5 633.1 1151.5 633.1 1159 633.1" stroke="#4c4c4c" stroke-width="2.2" fill="none" stroke-linecap="round"/><path d="M1219 633.1C1227.0 633.1 1227.0 633.1 1235 633.1" stroke="#4c4c4c" stroke-width="2.2" fill="none" stroke-linecap="round"/><path d="M1299 611.5C1359.5 611.5 1359.5 611.5 1420 611.5" stroke="#4c4c4c" stroke-width="2.2" fill="none" stroke-linecap="round"/><path d="M1402 686.5C1411.0 686.5 1411.0 686.5 1420 686.5" stroke="#4c4c4c" stroke-width="2.2" fill="none" stroke-linecap="round"/><path d="M1484 625.5C1548.5 625.5 1548.5 625.5 1613 625.5" stroke="#4c4c4c" stroke-width="2.2" fill="none" stroke-linecap="round"/><path d="M1587.5 646.4C1600.2 646.4 1600.2 646.4 1613 646.4" stroke="#4c4c4c" stroke-width="2.2" fill="none" stroke-linecap="round"/><defs><linearGradient id="lav" x1="0" y1="0" x2="0" y2="1"><stop offset="0" stop-color="#cfcfd8"/><stop offset=".5" stop-color="#b0b0bc"/><stop offset="1" stop-color="#9d9dab"/></linearGradient><linearGradient id="lite" x1="0" y1="0" x2="0" y2="1"><stop offset="0" stop-color="#efefef"/><stop offset=".5" stop-color="#e2e2e2"/><stop offset="1" stop-color="#cfcfcf"/></linearGradient><linearGradient id="grn" x1="0" y1="0" x2="0" y2="1"><stop offset="0" stop-color="#b4f268"/><stop offset=".3" stop-color="#90e63e"/><stop offset="1" stop-color="#78d42a"/></linearGradient><linearGradient id="cap" x1="0" y1="0" x2="0" y2="1"><stop offset="0" stop-color="#8c8c8c"/><stop offset=".1" stop-color="#666"/><stop offset=".115" stop-color="#3a3a3a"/><stop offset="1" stop-color="#2a2a2a"/></linearGradient><linearGradient id="capg" x1="0" y1="0" x2="0" y2="1"><stop offset="0" stop-color="#8aa880"/><stop offset=".1" stop-color="#6a8c60"/><stop offset=".115" stop-color="#2a5420"/><stop offset="1" stop-color="#1f4618"/></linearGradient><linearGradient id="khaki" x1="0" y1="0" x2="0" y2="1"><stop offset="0" stop-color="#d6d692"/><stop offset="1" stop-color="#b9b96c"/></linearGradient><linearGradient id="sage" x1="0" y1="0" x2="0" y2="1"><stop offset="0" stop-color="#cdd0b8"/><stop offset="1" stop-color="#aeb296"/></linearGradient><linearGradient id="tan" x1="0" y1="0" x2="0" y2="1"><stop offset="0" stop-color="#e2bd66"/><stop offset="1" stop-color="#c69a42"/></linearGradient><linearGradient id="sld" x1="0" y1="0" x2="0" y2="1"><stop offset="0" stop-color="#f6f6f6"/><stop offset="1" stop-color="#dcdcdc"/></linearGradient></defs><circle cx="1037.2" cy="475.8" r="3.300" fill="#fff" stroke="#1a1a1a" stroke-width="1.700"/><circle cx="1086.8" cy="475.8" r="3.300" fill="#fff" stroke="#1a1a1a" stroke-width="1.700"/><circle cx="1130.6" cy="493.4" r="3.300" fill="#fff" stroke="#1a1a1a" stroke-width="1.700"/><circle cx="1192" cy="493.4" r="3.300" fill="#fff" stroke="#1a1a1a" stroke-width="1.700"/><circle cx="1130.6" cy="513.7" r="3.300" fill="#fff" stroke="#1a1a1a" stroke-width="1.700"/><circle cx="1192" cy="513.7" r="3.300" fill="#fff" stroke="#1a1a1a" stroke-width="1.700"/><circle cx="1234.8" cy="611.5" r="3.300" fill="#fff" stroke="#1a1a1a" stroke-width="1.700"/><circle cx="1299" cy="611.5" r="3.300" fill="#fff" stroke="#1a1a1a" stroke-width="1.700"/><circle cx="1234.8" cy="633.1" r="3.300" fill="#fff" stroke="#1a1a1a" stroke-width="1.700"/><circle cx="1299" cy="633.1" r="3.300" fill="#fff" stroke="#1a1a1a" stroke-width="1.700"/><circle cx="1158.6" cy="633.1" r="3.300" fill="#fff" stroke="#1a1a1a" stroke-width="1.700"/><circle cx="1219.4" cy="633.1" r="3.300" fill="#fff" stroke="#1a1a1a" stroke-width="1.700"/><circle cx="1143.8" cy="633.1" r="3.300" fill="#fff" stroke="#1a1a1a" stroke-width="1.700"/><circle cx="1402.2" cy="686.7" r="3.300" fill="#fff" stroke="#1a1a1a" stroke-width="1.700"/><circle cx="1420" cy="611.5" r="3.300" fill="#fff" stroke="#1a1a1a" stroke-width="1.700"/><circle cx="1420" cy="630.1" r="3.300" fill="#fff" stroke="#1a1a1a" stroke-width="1.700"/><circle cx="1420" cy="649.1" r="3.300" fill="#fff" stroke="#1a1a1a" stroke-width="1.700"/><circle cx="1420" cy="667.5" r="3.300" fill="#fff" stroke="#1a1a1a" stroke-width="1.700"/><circle cx="1420" cy="686.5" r="3.300" fill="#fff" stroke="#1a1a1a" stroke-width="1.700"/><circle cx="1483.4" cy="625.5" r="3.300" fill="#fff" stroke="#1a1a1a" stroke-width="1.700"/><circle cx="1483.4" cy="672.1" r="3.300" fill="#fff" stroke="#1a1a1a" stroke-width="1.700"/><circle cx="1539.2" cy="646.4" r="3.300" fill="#fff" stroke="#1a1a1a" stroke-width="1.700"/><circle cx="1587.6" cy="646.4" r="3.300" fill="#fff" stroke="#1a1a1a" stroke-width="1.700"/><circle cx="1612.8" cy="625.5" r="3.300" fill="#fff" stroke="#1a1a1a" stroke-width="1.700"/><circle cx="1612.8" cy="646.4" r="3.300" fill="#fff" stroke="#1a1a1a" stroke-width="1.700"/><circle cx="1677" cy="635.8" r="3.300" fill="#fff" stroke="#1a1a1a" stroke-width="1.700"/><circle cx="1814.6" cy="474.4" r="3.300" fill="#fff" stroke="#1a1a1a" stroke-width="1.700"/><circle cx="1814.6" cy="492.8" r="3.300" fill="#fff" stroke="#1a1a1a" stroke-width="1.700"/><circle cx="1814.6" cy="511.8" r="3.300" fill="#fff" stroke="#1a1a1a" stroke-width="1.700"/><circle cx="1879.6" cy="492.8" r="3.300" fill="#fff" stroke="#1a1a1a" stroke-width="1.700"/><rect x="1038.2" y="486" width="47.4" height="14.1" fill="url(#khaki)" stroke="#77773c" stroke-width="1"/><rect x="1131.1" y="542.4" width="60.2" height="13.5" fill="url(#khaki)" stroke="#77773c" stroke-width="1"/><rect x="1420.5" y="698.7" width="62.3" height="14.1" fill="url(#sage)" stroke="#6e7060" stroke-width="1"/><rect x="1613.4" y="659.9" width="62.9" height="13.6" fill="url(#sage)" stroke="#6e7060" stroke-width="1"/><rect x="1815.2" y="524.5" width="63.7" height="13.5" fill="url(#tan)" stroke="#8a6a28" stroke-width="1"/><rect x="1038.2" y="466.3" width="47.4" height="18.4" rx="3" fill="url(#lav)" stroke="#3c3c3c" stroke-width="1.100"/><rect x="1131.1" y="481.2" width="60.2" height="45.5" rx="3" fill="url(#lite)" stroke="#3c3c3c" stroke-width="1.100"/><rect x="1148.5" y="483.3" width="23.8" height="41.2" rx="3.500" fill="url(#cap)" stroke="#151515" stroke-width=".8"/><rect x="1149.5" y="484.3" width="21.8" height="39.2" rx="2.800" fill="none" stroke="#fff" stroke-opacity=".28" stroke-width=".8"/><path d="M1136.600 527.200H1185.900V536.500Q1185.900 538.900 1183.500 538.900H1139Q1136.600 538.900 1136.600 536.500Z" fill="#2a2a2a"/><rect x="1235.4" y="599.8" width="62.9" height="46.6" rx="3" fill="url(#lav)" stroke="#3c3c3c" stroke-width="1.100"/><rect x="1254.1" y="602" width="23.0" height="42.5" rx="3.500" fill="url(#cap)" stroke="#151515" stroke-width=".8"/><rect x="1255.1" y="603" width="21.0" height="40.5" rx="2.800" fill="none" stroke="#fff" stroke-opacity=".28" stroke-width=".8"/><rect x="1159.3" y="620.1" width="59.6" height="26.3" rx="3" fill="url(#lav)" stroke="#3c3c3c" stroke-width="1.100"/><rect x="1175.6" y="622.8" width="22.2" height="20.9" rx="3.500" fill="url(#cap)" stroke="#151515" stroke-width=".8"/><rect x="1176.6" y="623.8" width="20.2" height="18.9" rx="2.800" fill="none" stroke="#fff" stroke-opacity=".28" stroke-width=".8"/><path d="M1182.500 628.800L1191 637.400M1191 628.800L1182.500 637.400" stroke="#fff" stroke-width="2.300"/><rect x="1025.6" y="624.2" width="117.5" height="18.4" rx="3" fill="url(#sld)" stroke="#4a4a4a" stroke-width="1"/><rect x="989.5" y="624.2" width="40.1" height="18.4" rx="3" fill="url(#lav)" stroke="#3c3c3c" stroke-width="1"/><path d="M1037.6 632.9000000000001H1135.1" stroke="#cfcfcf" stroke-width="1"/><path d="M1037.6 630.4000000000001v2.500" stroke="#d0d0d0" stroke-width=".8"/><path d="M1047.3 630.4000000000001v2.500" stroke="#d0d0d0" stroke-width=".8"/><path d="M1057.1 630.4000000000001v2.500" stroke="#d0d0d0" stroke-width=".8"/><path d="M1066.8 630.4000000000001v2.500" stroke="#d0d0d0" stroke-width=".8"/><path d="M1076.6 630.4000000000001v2.500" stroke="#d0d0d0" stroke-width=".8"/><path d="M1086.3 630.4000000000001v2.500" stroke="#d0d0d0" stroke-width=".8"/><path d="M1096.1 630.4000000000001v2.500" stroke="#d0d0d0" stroke-width=".8"/><path d="M1105.8 630.4000000000001v2.500" stroke="#d0d0d0" stroke-width=".8"/><path d="M1115.6 630.4000000000001v2.500" stroke="#d0d0d0" stroke-width=".8"/><path d="M1125.3 630.4000000000001v2.500" stroke="#d0d0d0" stroke-width=".8"/><path d="M1135.1 630.4000000000001v2.500" stroke="#d0d0d0" stroke-width=".8"/><path d="M1083.4 633.1L1086.2 630.3000000000001L1089.0 633.1L1086.2 635.9Z" fill="#fff" stroke="#111" stroke-width="1.200"/><rect x="1284.2" y="677.8" width="117.5" height="18.2" rx="3" fill="url(#sld)" stroke="#4a4a4a" stroke-width="1"/><rect x="1244.6" y="677.8" width="43.6" height="18.2" rx="3" fill="url(#lav)" stroke="#3c3c3c" stroke-width="1"/><path d="M1296.2 686.4H1393.7" stroke="#cfcfcf" stroke-width="1"/><path d="M1296.2 683.9v2.500" stroke="#d0d0d0" stroke-width=".8"/><path d="M1306.0 683.9v2.500" stroke="#d0d0d0" stroke-width=".8"/><path d="M1315.7 683.9v2.500" stroke="#d0d0d0" stroke-width=".8"/><path d="M1325.5 683.9v2.500" stroke="#d0d0d0" stroke-width=".8"/><path d="M1335.2 683.9v2.500" stroke="#d0d0d0" stroke-width=".8"/><path d="M1345.0 683.9v2.500" stroke="#d0d0d0" stroke-width=".8"/><path d="M1354.7 683.9v2.500" stroke="#d0d0d0" stroke-width=".8"/><path d="M1364.5 683.9v2.500" stroke="#d0d0d0" stroke-width=".8"/><path d="M1374.2 683.9v2.500" stroke="#d0d0d0" stroke-width=".8"/><path d="M1384.0 683.9v2.500" stroke="#d0d0d0" stroke-width=".8"/><path d="M1393.7 683.9v2.500" stroke="#d0d0d0" stroke-width=".8"/><path d="M1323.1000000000001 686.7L1325.9 683.9000000000001L1328.7 686.7L1325.9 689.5Z" fill="#fff" stroke="#111" stroke-width="1.200"/><rect x="1420.5" y="600.6" width="62.3" height="96.7" rx="3" fill="url(#lite)" stroke="#3c3c3c" stroke-width="1.100"/><rect x="1438.7" y="602.5" width="23.1" height="93.5" rx="3.500" fill="url(#cap)" stroke="#151515" stroke-width=".8"/><rect x="1439.7" y="603.5" width="21.1" height="91.5" rx="2.800" fill="none" stroke="#fff" stroke-opacity=".28" stroke-width=".8"/><rect x="1540" y="636.9" width="46.9" height="18.4" rx="3" fill="url(#lav)" stroke="#3c3c3c" stroke-width="1.100"/><rect x="1613.4" y="614.7" width="62.9" height="44.2" rx="3" fill="url(#lav)" stroke="#3c3c3c" stroke-width="1.100"/><rect x="1631.6" y="616.6" width="23.0" height="40.1" rx="3.500" fill="url(#cap)" stroke="#151515" stroke-width=".8"/><rect x="1632.6" y="617.6" width="21.0" height="38.1" rx="2.800" fill="none" stroke="#fff" stroke-opacity=".28" stroke-width=".8"/><rect x="1815.2" y="463.6" width="63.7" height="59.8" rx="3" fill="url(#grn)" stroke="#2c5a12" stroke-width="1.100"/><rect x="1834.2" y="465.7" width="23.0" height="55.6" rx="3.500" fill="url(#capg)" stroke="#151515" stroke-width=".8"/><rect x="1835.2" y="466.7" width="21.0" height="53.6" rx="2.800" fill="none" stroke="#fff" stroke-opacity=".28" stroke-width=".8"/><path d="M1058.4 487.5L1061.9 483.0L1065.4 487.5Z" fill="#d6d692"/><path d="M1156.9 543.5L1160.4 539.0L1163.9 543.5Z" fill="#d6d692"/><path d="M1446.7 699.5L1450.2 695.0L1453.7 699.5Z" fill="#cdd0b8"/><path d="M1639.5 660.5L1643 656.0L1646.5 660.5Z" fill="#cdd0b8"/><path d="M1842.2 525L1845.7 520.5L1849.2 525Z" fill="#e2bd66"/><defs><linearGradient id="wg" x1="0" y1="0" x2="0" y2="1"><stop offset="0" stop-color="#f2f2f2"/><stop offset=".5" stop-color="#d8dada"/><stop offset="1" stop-color="#a2aaaa"/></linearGradient><radialGradient id="cmp" cx=".5" cy=".5" r=".5"><stop offset="0" stop-color="#dcdcdc"/><stop offset=".7" stop-color="#cfcfcf"/><stop offset="1" stop-color="#e8e8e8"/></radialGradient></defs><rect x="955" y="995.500" width="60.500" height="25.500" fill="url(#wg)" stroke="#3a3a3a" stroke-width="1.400"/><rect x="1009" y="996.500" width="6" height="23.500" fill="#6a6a6a" fill-opacity=".55"/><path d="M960.500 1005Q961 1000.500 965.500 1000.500Q969 1001 970.500 1003.500Q975.500 1004 976 1009.500Q976 1014.500 971.500 1015Q967.500 1015 967 1010.500Q960.500 1010 960.500 1005Z" fill="#f59a1a" stroke="#b85c08" stroke-width=".9"/><path d="M989 1013.500L1000.500 1000.500M990 1001.500Q993 1007 995.500 1007.500L1001.500 1008.500" stroke="#6a1a20" stroke-width="1.400" fill="none"/><circle cx="1884" cy="994" r="19" fill="url(#cmp)" stroke="#8a8a8a" stroke-width="1.200"/><circle cx="1884" cy="994" r="14" fill="#d2d2d2" stroke="#f4f4f4" stroke-width="1.500"/><path d="M1896.4 1006.4L1890.4 1004.6L1894.6 1000.4Z" fill="#fff"/><path d="M1871.6 1006.4L1873.4 1000.4L1877.6 1004.6Z" fill="#fff"/><path d="M1871.6 981.6L1877.6 983.4L1873.4 987.6Z" fill="#fff"/><path d="M1896.4 981.6L1894.6 987.6L1890.4 983.4Z" fill="#fff"/><path d="M1859 977L1870 979L1865.500 982L1866 987Z" fill="#1a1a1a"/><path d="M1869 978Q1876 973 1884 974.500" stroke="#1a1a1a" stroke-width="1.600" fill="none"/></svg>
<span class="t" style="left:1051.00px;top:470px;font-size:10.5px;line-height:12px;height:12px;color:#222;transform:scaleX(0.9243);">Brep</span>
<span class="t" style="left:1049.90px;top:487px;font-size:10.5px;line-height:12px;height:12px;color:#33331a;transform:scaleX(0.9153);">12ms</span>
<span class="t" style="left:1140.30px;top:488px;font-size:9.5px;line-height:11px;height:11px;color:#333;margin-left:-3.43px;">C</span>
<span class="t" style="left:1140.30px;top:508px;font-size:9.5px;line-height:11px;height:11px;color:#333;margin-left:-3.17px;">P</span>
<span class="t" style="left:1178.50px;top:488px;font-size:9.5px;line-height:11px;height:11px;color:#333;margin-left:-3.17px;">B</span>
<span class="t" style="left:1178.50px;top:508px;font-size:9.5px;line-height:11px;height:11px;color:#333;margin-left:-3.17px;">B</span>
<span class="t" style="left:1144.08px;top:495.23px;width:32.64px;font-size:12.5px;line-height:15.00px;color:#fff;transform-origin:50% 50%;transform:rotate(-90deg) scaleX(0.9957);font-weight:bold;">BBox</span>
<span class="t" style="left:1139.00px;top:527px;font-size:10px;line-height:11px;height:11px;color:#fff;transform:scaleX(0.9335);">Per Object</span>
<span class="t" style="left:1149.30px;top:543px;font-size:10.5px;line-height:12px;height:12px;color:#33331a;transform:scaleX(0.9192);">15ms</span>
<span class="t" style="left:1244.90px;top:606px;font-size:9.5px;line-height:11px;height:11px;color:#333;margin-left:-3.69px;">G</span>
<span class="t" style="left:1244.90px;top:627px;font-size:9.5px;line-height:11px;height:11px;color:#333;margin-left:-2.90px;">T</span>
<span class="t" style="left:1283.90px;top:606px;font-size:9.5px;line-height:11px;height:11px;color:#333;margin-left:-3.69px;">G</span>
<span class="t" style="left:1283.90px;top:627px;font-size:9.5px;line-height:11px;height:11px;color:#333;margin-left:-3.17px;">X</span>
<span class="t" style="left:1249.63px;top:614.52px;width:31.95px;font-size:12.5px;line-height:15.00px;color:#fff;transform-origin:50% 50%;transform:rotate(-90deg) scaleX(1.1111);font-weight:bold;">Move</span>
<span class="t" style="left:1167.40px;top:627px;font-size:9.5px;line-height:11px;height:11px;color:#333;margin-left:-2.90px;">F</span>
<span class="t" style="left:1204.80px;top:627px;font-size:9.5px;line-height:11px;height:11px;color:#333;margin-left:-3.17px;">V</span>
<span class="t" style="left:995.40px;top:627px;font-size:10.5px;line-height:12px;height:12px;color:#222;transform:scaleX(0.9377);">Factor</span>
<span class="t" style="left:1067.20px;top:627px;font-size:10.5px;line-height:12px;height:12px;color:#222;transform:scaleX(0.9248);">50</span>
<span class="t" style="left:1250.00px;top:680px;font-size:10.5px;line-height:12px;height:12px;color:#222;transform:scaleX(0.8990);">Scale Z</span>
<span class="t" style="left:1333.50px;top:680px;font-size:10.5px;line-height:12px;height:12px;color:#222;transform:scaleX(0.8049);">3</span>
<span class="t" style="left:1430.30px;top:606px;font-size:9.5px;line-height:11px;height:11px;color:#333;margin-left:-3.69px;">G</span>
<span class="t" style="left:1430.30px;top:624px;font-size:9.5px;line-height:11px;height:11px;color:#333;margin-left:-3.17px;">P</span>
<span class="t" style="left:1430.30px;top:643px;font-size:9.5px;line-height:11px;height:11px;color:#333;margin-left:-3.17px;">X</span>
<span class="t" style="left:1430.30px;top:662px;font-size:9.5px;line-height:11px;height:11px;color:#333;margin-left:-3.17px;">Y</span>
<span class="t" style="left:1430.30px;top:681px;font-size:9.5px;line-height:11px;height:11px;color:#333;margin-left:-2.90px;">Z</span>
<span class="t" style="left:1468.50px;top:620px;font-size:9.5px;line-height:11px;height:11px;color:#333;margin-left:-3.69px;">G</span>
<span class="t" style="left:1468.50px;top:666px;font-size:9.5px;line-height:11px;height:11px;color:#333;margin-left:-3.17px;">X</span>
<span class="t" style="left:1423.10px;top:641.98px;width:54.19px;font-size:12.5px;line-height:15.00px;color:#fff;transform-origin:50% 50%;transform:rotate(-90deg) scaleX(0.9596);font-weight:bold;">Scale NU</span>
<span class="t" style="left:1442.00px;top:699px;font-size:10.5px;line-height:12px;height:12px;color:#2a2a20;transform:scaleX(0.9125);">5ms</span>
<span class="t" style="left:1555.70px;top:640px;font-size:10.5px;line-height:12px;height:12px;color:#222;transform:scaleX(0.8819);">Crv</span>
<span class="t" style="left:1622.90px;top:620px;font-size:9.5px;line-height:11px;height:11px;color:#333;margin-left:-3.69px;">G</span>
<span class="t" style="left:1622.90px;top:641px;font-size:9.5px;line-height:11px;height:11px;color:#333;margin-left:-3.17px;">B</span>
<span class="t" style="left:1661.40px;top:630px;font-size:9.5px;line-height:11px;height:11px;color:#333;margin-left:-3.69px;">G</span>
<span class="t" style="left:1627.48px;top:628.33px;width:31.25px;font-size:12.5px;line-height:15.00px;color:#fff;transform-origin:50% 50%;transform:rotate(-90deg) scaleX(1.0145);font-weight:bold;">Bend</span>
<span class="t" style="left:1635.10px;top:660px;font-size:10.5px;line-height:12px;height:12px;color:#2a2a20;transform:scaleX(0.9176);">9ms</span>
<span class="t" style="left:1825.80px;top:469px;font-size:10px;line-height:11px;height:11px;color:#1c6a0c;margin-left:-3.89px;">G</span>
<span class="t" style="left:1825.80px;top:487px;font-size:10px;line-height:11px;height:11px;color:#1c6a0c;margin-left:-3.61px;">R</span>
<span class="t" style="left:1825.80px;top:506px;font-size:10px;line-height:11px;height:11px;color:#1c6a0c;margin-left:-3.05px;">T</span>
<span class="t" style="left:1864.00px;top:487px;font-size:10px;line-height:11px;height:11px;color:#1c6a0c;margin-left:-3.89px;">G</span>
<span class="t" style="left:1826.61px;top:485.73px;width:38.18px;font-size:12.5px;line-height:15.00px;color:#c8f0a8;transform-origin:50% 50%;transform:rotate(-90deg) scaleX(1.0660);font-weight:bold;">Morph</span>
<span class="t" style="left:1834.70px;top:525px;font-size:10.5px;line-height:12px;height:12px;color:#3a2808;transform:scaleX(0.9309);">22ms</span>
<div class="a" style="left:955px;top:1022px;width:957px;height:21px;background:#f0f0f0;border-top:1px solid #bcbcbc"></div>
<div class="a" style="left:955px;top:1041.7px;width:958px;height:1.3px;background:#9a9a9a;"></div>
<span class="t" style="left:962.00px;top:1028px;font-size:10px;line-height:11px;height:11px;color:#333;transform:scaleX(0.9119);">...</span>
<span class="t" style="left:1841.50px;top:1027px;font-size:10.5px;line-height:12px;height:12px;color:#8a8a8a;transform:scaleX(0.9665);">1.0.0007</span>
<svg class="a" style="left:1898px;top:1029px" width="12" height="12"><path d="M9 3h1.500v1.500H9zM9 6.500h1.500V8H9zM5.500 6.500H7V8H5.500zM9 10h1.500v1.500H9zM5.500 10H7v1.500H5.500zM2 10h1.500v1.500H2z" fill="#9a9a9a"/></svg>
<div class="a" style="left:1912px;top:0px;width:8px;height:1043px;background:#c4c5c7;"></div>
<div class="a" style="left:1913.7px;top:122px;width:3.6px;height:921px;background:#adadad;"></div>
<div class="a" style="left:1917.3px;top:122px;width:2.7px;height:921px;background:#cbcbcb;"></div>
<div class="a" style="left:1912.5px;top:0px;width:1.2px;height:1043px;background:#858585;"></div>
<div class="a" style="left:0px;top:1043px;width:1920px;height:37px;background:linear-gradient(90deg,#e0e0e0 0%,#dedede 45%,#d9dad8 55%,#dedad6 62%,#e2d9d3 68%,#e8ddd8 75%,#e5dfdc 85%,#e1e0df 100%);"></div>
<div class="a" style="left:45.75px;top:1043.5px;width:268.5px;height:36.5px;background:#fff;"></div>
<div class="a" style="left:640.5px;top:1043px;width:47.5px;height:37px;background:#f1efee;"></div>
<div class="a" style="left:552px;top:1078px;width:38px;height:2px;background:#2a7ad8;"></div>
<div class="a" style="left:598.5px;top:1078px;width:38.5px;height:2px;background:#2a7ad8;"></div>
<div class="a" style="left:640.5px;top:1078px;width:47.5px;height:2px;background:#1a6ad0;"></div>
<div class="a" style="left:971px;top:1078px;width:38.5px;height:2px;background:#2a7ad8;"></div>
<div class="a" style="left:1017.5px;top:1078px;width:38.5px;height:2px;background:#2a7ad8;"></div>
<span class="t" style="left:83.00px;top:1053px;font-size:14px;line-height:16px;height:16px;color:#4a4a4a;transform:scaleX(0.9860);">Type here to search</span>
<span class="t" style="left:1483.50px;top:1054px;font-size:14px;line-height:16px;height:16px;color:#1f1f1f;transform:scaleX(0.9513);">Earnings upcoming</span>
<span class="t" style="left:1780.00px;top:1055px;font-size:11px;line-height:12px;height:12px;color:#222;transform:scaleX(0.9019);">ENG</span>
<span class="t" style="left:1819.00px;top:1046px;font-size:11px;line-height:12px;height:12px;color:#222;transform:scaleX(0.9643);">7:43 PM</span>
<span class="t" style="left:1813.00px;top:1064px;font-size:11px;line-height:12px;height:12px;color:#222;transform:scaleX(1.0423);">9/16/2024</span>
<svg class="a" style="left:0;top:1043px" width="1920" height="37" viewBox="0 1043 1920 37"><path d="M14.500 1056L21 1055V1060.500H14.500ZM22 1054.800L30.500 1053.500V1060.500H22ZM14.500 1061.500H21V1067L14.500 1066ZM22 1061.500H30.500V1068.500L22 1067.200Z" fill="#111"/><circle cx="66" cy="1058.500" r="4.800" fill="none" stroke="#222" stroke-width="1.400"/><path d="M62.500 1062L57.500 1067.500" stroke="#222" stroke-width="1.500"/><path d="M270 1049.5Q273.08 1057.42 281 1060.5Q273.08 1063.58 270 1071.5Q266.92 1063.58 259 1060.5Q266.92 1057.42 270 1049.5Z" fill="#f6b820"/><path d="M291 1058.5Q292.54 1062.46 296.5 1064Q292.54 1065.54 291 1069.5Q289.46 1065.54 285.5 1064Q289.46 1062.46 291 1058.5Z" fill="#f8c030"/><path d="M252 1064.5Q253.12 1067.38 256 1068.5Q253.12 1069.62 252 1072.5Q250.88 1069.62 248 1068.5Q250.88 1067.38 252 1064.5Z" fill="#1a9ae8"/><circle cx="285.500" cy="1051.500" r="1.600" fill="#e04828"/><circle cx="303" cy="1069.800" r="1.600" fill="#70b838"/><path d="M329.500 1055.500H340V1066.500H329.500ZM343.500 1054V1057M343.500 1059.500V1068M329.500 1053.500V1055.500M340 1053.500V1055.500M329.500 1066.500V1068.500M340 1066.500V1068.500" stroke="#222" stroke-width="1.300" fill="none"/><circle cx="385" cy="1061" r="10" fill="#f4f8fc" stroke="#9ab4cc" stroke-width="1"/><path d="M376 1058Q381 1050 390 1052Q386 1054 384 1058Q381 1062 376 1058Z" fill="#48a838"/><path d="M383 1070Q394 1070 395 1060Q392 1055 387 1057Q391 1062 383 1070Z" fill="#1a78c8"/><path d="M378 1066Q384 1060 392 1062" stroke="#1a78c8" stroke-width="1.500" fill="none"/><circle cx="431.500" cy="1060" r="10" fill="#111"/><path d="M425 1054Q431.500 1058 431.500 1060Q431.500 1058 438 1054" stroke="#eee" stroke-width="1.700" fill="none"/><path d="M425 1067Q428 1061 431.500 1059Q435 1061 438 1067" stroke="#eee" stroke-width="1.500" fill="none"/><circle cx="444" cy="1068" r="6.500" fill="#f2f2f2" stroke="#777" stroke-width=".9"/><rect x="467.300" y="1050" width="22" height="21.700" fill="#c4202c"/><path d="M469 1062Q471 1057 477 1057.500L481 1055.500L487 1057L489 1060L481 1061.500L477 1065L471 1064.500Z" fill="#1a0608"/><rect x="516" y="1050" width="12" height="9" fill="#2a50d8" stroke="#1a2a90" stroke-width=".6"/><rect x="522" y="1053" width="13" height="10" fill="#a8c4f0" stroke="#5a7ac0" stroke-width=".6"/><path d="M519 1062H525M528 1067H533" stroke="#555" stroke-width="1.500"/><circle cx="531.500" cy="1069" r="3" fill="#e8e8e8" stroke="#4a9a4a" stroke-width=".8"/><circle cx="571" cy="1061" r="10" fill="#ff8a18"/><circle cx="571.500" cy="1062" r="6" fill="#7a3ae0"/><path d="M562 1056Q566 1050 574 1051.500Q569 1053 568.500 1057Q572 1056.500 574 1059Q570 1060 570 1063Q572 1067 577 1065Q574 1071 567 1069Q560 1065 562 1056Z" fill="#ffb020"/><path d="M579 1054Q583 1060 580 1066" stroke="#e8382a" stroke-width="2" fill="none"/><circle cx="617" cy="1060" r="10" fill="#e84030"/><path d="M617 1060L608.300 1055A10 10 0 0 0 612 1068.700Z" fill="#30a050"/><path d="M617 1060L612 1068.700A10 10 0 0 0 627 1060Z" fill="#f8c020"/><path d="M617 1060H627A10 10 0 0 0 608.300 1055Z" fill="#e84030"/><circle cx="617" cy="1060" r="4.200" fill="#3a80f0" stroke="#fff" stroke-width="1.300"/><circle cx="622.500" cy="1067.500" r="5" fill="#6a4038"/><rect x="652" y="1049.400" width="25" height="23" fill="#0c0c0c"/><path d="M655 1068L657 1060L661 1054L663 1058L666 1055L669 1060L672 1062L670 1066L674 1071H660L657 1070Z" fill="#f4f4f4"/><path d="M660 1062L664 1060L666 1063" stroke="#0c0c0c" stroke-width="1" fill="none"/><circle cx="666.500" cy="1061" r=".9" fill="#0c0c0c"/><circle cx="711" cy="1060.500" r="10.500" fill="#f26822"/><path d="M700.800 1063.500H705V1055L711 1061L717 1055V1063.500H721.200A10.500 10.500 0 0 1 700.800 1063.500Z" fill="#4c4c4c"/><path d="M705 1063.500V1055L711 1061L717 1055V1063.500" stroke="#fff" stroke-width="1.800" fill="none"/><circle cx="757" cy="1060" r="9.500" fill="#fff" stroke="#2a9a48" stroke-width="2"/><path d="M749 1070.500L750.500 1065.500L754 1068.500Z" fill="#2a9a48"/><path d="M753 1056Q753 1064 761 1064.500L762 1062L759.500 1060.500L758.500 1061.500Q756 1060.500 755.500 1058L756.500 1057L755 1054.500Z" fill="#2a9a48"/><circle cx="768.500" cy="1068" r="6.500" fill="#f2f2f2" stroke="#777" stroke-width=".9"/><rect x="793.500" y="1050" width="20.500" height="20.500" rx="3.500" fill="#49021f"/><rect x="840" y="1050" width="21" height="21" rx="4.500" fill="#0a0a0a"/><path d="M849 1066V1057H854Q857 1057 857 1060Q857 1063 854 1063H849" stroke="#fff" stroke-width="1.800" fill="none"/><path d="M844 1056L848 1054.500M844.500 1059L847.500 1058" stroke="#58b030" stroke-width="1"/><rect x="886" y="1050" width="21" height="22" fill="#f6eeec"/><path d="M888 1070L895 1051H899L906 1070H901.500L897 1057L894.500 1064H899L900 1066.500H893.500L892.500 1070Z" fill="#c8202a"/><path d="M932 1053H939L941 1055H953V1058H932Z" fill="#e8a818"/><rect x="932" y="1056.500" width="21" height="13" fill="#f8d058"/><path d="M937 1069.500V1064H948V1069.500" stroke="#2a88d8" stroke-width="2.200" fill="none"/><path d="M985.500 1051.500H993.500L1001 1064.500H993Z" fill="#f8c020"/><path d="M985.500 1051.500L978 1064.500L982 1071L989.500 1058Z" fill="#1a9a50"/><path d="M982 1071H997L1001 1064.500H986Z" fill="#3a80e8"/><ellipse cx="1035" cy="1062.500" rx="10" ry="8" fill="#e4ecf4" stroke="#8aa0b8" stroke-width=".8"/><circle cx="1030" cy="1059.500" r="1.700" fill="#e04030"/><circle cx="1035" cy="1057.500" r="1.700" fill="#f0b020"/><circle cx="1029.500" cy="1064.500" r="1.700" fill="#3a80e0"/><circle cx="1034" cy="1067" r="1.700" fill="#40a848"/><path d="M1037 1066L1045 1052L1047 1053L1040 1067.500Z" fill="#c89048" stroke="#7a5020" stroke-width=".5"/><path d="M1456.500 1050.500H1467L1473 1056.500V1072.500H1456.500Z" fill="#38a8e8"/><path d="M1467 1050.500L1473 1056.500H1467Z" fill="#8ad0f8"/><path d="M1459 1062V1066M1462 1060V1066M1465 1063V1066M1468 1061.500V1066" stroke="#0a5a98" stroke-width="1.600"/><path d="M1459 1068.500H1470.500" stroke="#e8f4fc" stroke-width="1.600"/><path d="M1621.500 1064.500L1627 1059L1632.500 1064.500" stroke="#222" stroke-width="1.300" fill="none"/><path d="M1644 1065.500Q1641.500 1062 1645 1060.500Q1646.500 1056.500 1651 1058Q1655 1057 1656 1061Q1658.500 1062.500 1656.500 1065.500Z" fill="#fff" stroke="#333" stroke-width="1.100"/><rect x="1668" y="1056" width="7" height="10.500" rx="2" fill="none" stroke="#333" stroke-width="1.100"/><path d="M1675 1059.500L1678.500 1057.500V1065L1675 1063" stroke="#333" stroke-width="1" fill="none"/><circle cx="1671.500" cy="1059.500" r="1.200" fill="none" stroke="#333" stroke-width=".8"/><path d="M1688 1057.500L1702 1055V1066.500L1688 1068Z" fill="#f4f4f4" stroke="#333" stroke-width="1.100"/><path d="M1692 1064Q1692 1060 1696 1060" stroke="#333" stroke-width="1" fill="none"/><circle cx="1698.800" cy="1067.500" r="2.600" fill="#1a78d8"/><rect x="1711.500" y="1057.500" width="13" height="7.500" fill="#222"/><path d="M1710 1056V1059M1725.500 1059.500V1063" stroke="#222" stroke-width="1.300"/><path d="M1734.500 1066.500Q1735.500 1058 1745 1057.500M1737.500 1066.500Q1738.500 1061 1745 1060.500M1740.500 1066.500Q1741 1063.500 1744.500 1063.500" stroke="#444" stroke-width="1.100" fill="none"/><circle cx="1743.500" cy="1066.500" r="1.100" fill="#222"/><path d="M1755.500 1059.500H1758L1761 1056.500V1067L1758 1064H1755.500Z" fill="none" stroke="#222" stroke-width="1.100"/><path d="M1763.500 1059.500Q1765 1061.800 1763.500 1064M1766 1057.500Q1768.500 1061.800 1766 1066" stroke="#777" stroke-width="1" fill="none"/><path d="M1881.500 1054.500H1897V1066H1892L1889.300 1068.800L1886.500 1066H1881.500Z" fill="none" stroke="#222" stroke-width="1.200"/></svg>
<span class="t" style="left:444.00px;top:1062px;font-size:10.5px;line-height:12px;height:12px;color:#111;margin-left:-2.92px;">1</span>
<span class="t" style="left:768.50px;top:1062px;font-size:10.5px;line-height:12px;height:12px;color:#111;margin-left:-2.92px;">2</span>
<span class="t" style="left:803.80px;top:1054px;font-size:10.5px;line-height:12px;height:12px;color:#f0409a;font-weight:bold;margin-left:-4.67px;">Id</span>
<span class="t" style="left:672.50px;top:1051px;font-size:9px;line-height:10px;height:10px;color:#f4f4f4;margin-left:-2.50px;">6</span>
<span class="t" style="left:622.50px;top:1064px;font-size:6.5px;line-height:7px;height:7px;color:#fff;margin-left:-2.17px;">B</span></body></html>
